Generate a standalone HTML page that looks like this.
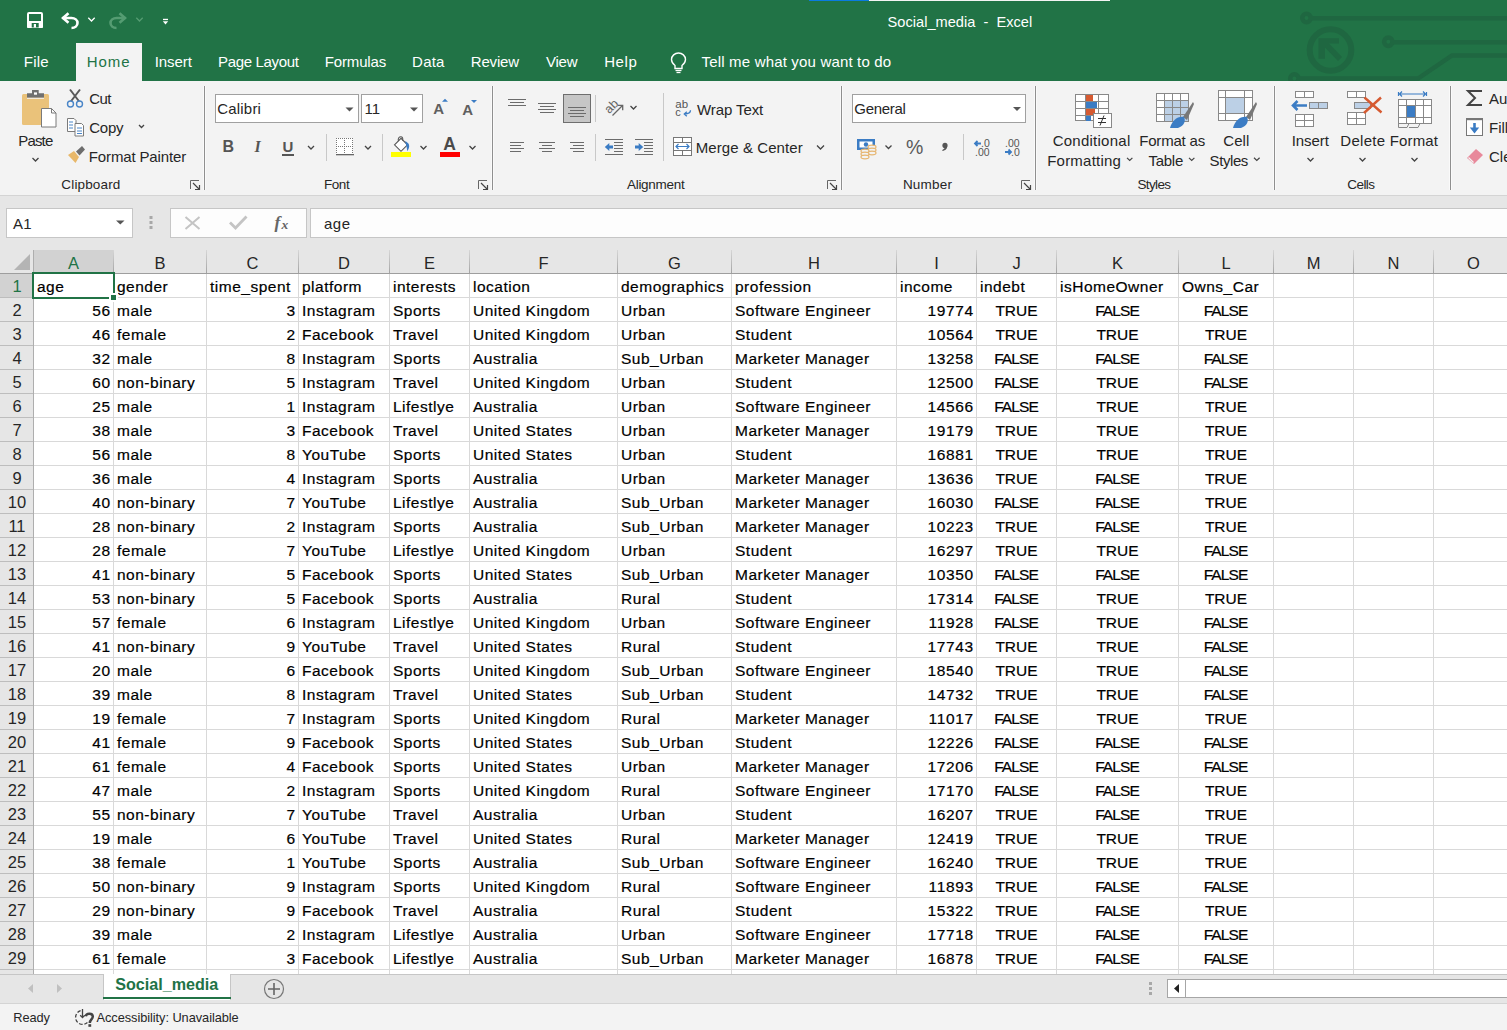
<!DOCTYPE html><html><head><meta charset="utf-8"><style>
*{box-sizing:border-box}
html,body{margin:0;padding:0}
body{width:1507px;height:1030px;overflow:hidden;position:relative;background:#fff;font-family:"Liberation Sans",sans-serif}
.a{position:absolute}
.t{position:absolute;white-space:pre;line-height:1}
svg{position:absolute;overflow:visible}
.c{-webkit-text-stroke:0.2px currentColor}
</style></head><body>
<div class="a" style="left:0;top:0;width:1507px;height:81px;background:#217346"></div>
<div class="a" style="left:809px;top:0;width:60px;height:1px;background:#0a7be0"></div>
<div class="a" style="left:869px;top:0;width:241px;height:1px;background:#f4f4f4"></div>
<svg style="left:0;top:0" width="1507" height="81" viewBox="0 0 1507 81">
<g fill="none" stroke="#1f6741" stroke-width="4.5">
<circle cx="1306.5" cy="18" r="4.2"/><line x1="1311" y1="18.2" x2="1507" y2="18.2"/>
<circle cx="1388.3" cy="41.8" r="4.2"/><line x1="1393" y1="42.2" x2="1507" y2="42.2"/>
<circle cx="1294.4" cy="78.5" r="4.2"/><polyline points="1299,78.5 1418,78.5 1452,55.5 1507,55.5"/>
<circle cx="1330.5" cy="50" r="20.8" stroke-width="6"/>
</g>
<path d="M1318.5 38.3 L1339 38.3 L1339 43.5 L1329 43.5 L1342 57 L1338 61 L1325 47.5 L1325 58.8 L1318.5 58.8 Z" fill="#1f6741"/>
</svg>
<svg style="left:0;top:0" width="200" height="40" viewBox="0 0 200 40">
<rect x="28" y="13" width="14" height="14" rx="1" fill="none" stroke="#fff" stroke-width="2"/>
<rect x="27" y="21" width="16" height="7" rx="1" fill="#fff"/>
<rect x="31.7" y="23" width="7" height="4.5" fill="#217346"/>
<rect x="33.8" y="24" width="2.2" height="3.5" fill="#fff"/>
<path d="M62.5 18 H71.5 C75 18 77.5 20.3 77.5 23 C77.5 25.7 75 28 71.5 28" fill="none" stroke="#fff" stroke-width="2.6"/>
<path d="M68.5 13.2 L63 18 L68.5 22.8" fill="none" stroke="#fff" stroke-width="2.6"/>
<path d="M88.3 17.8 L91.5 21 L94.7 17.8" fill="none" stroke="#fff" stroke-width="1.3"/>
<path d="M125.5 18 H116.5 C113 18 110.5 20.3 110.5 23 C110.5 25.7 113 28 116.5 28" fill="none" stroke="#559c72" stroke-width="2.6"/>
<path d="M119.5 13.2 L125 18 L119.5 22.8" fill="none" stroke="#559c72" stroke-width="2.6"/>
<path d="M136.3 17.8 L139.5 21 L142.7 17.8" fill="none" stroke="#559c72" stroke-width="1.3"/>
<rect x="163" y="18.8" width="5" height="1.3" fill="#fff"/>
<path d="M162.8 21.2 H168.2 L165.5 24.6 Z" fill="#fff"/>
</svg>
<div class="t" style="left:887.62px;top:14.64px;font-size:14.60px;letter-spacing:0.007px;color:#fff;font-weight:normal;font-family:'Liberation Sans';">Social_media  -  Excel</div>
<div class="a" style="left:76px;top:43px;width:66px;height:39px;background:#f3f3f3"></div>
<div class="t" style="left:23.80px;top:54.30px;font-size:15.00px;letter-spacing:0.191px;color:#fff;font-weight:normal;font-family:'Liberation Sans';">File</div>
<div class="t" style="left:86.80px;top:54.30px;font-size:15.00px;letter-spacing:0.910px;color:#217346;font-weight:normal;font-family:'Liberation Sans';">Home</div>
<div class="t" style="left:154.65px;top:54.30px;font-size:15.00px;letter-spacing:-0.039px;color:#fff;font-weight:normal;font-family:'Liberation Sans';">Insert</div>
<div class="t" style="left:218.00px;top:54.30px;font-size:15.00px;letter-spacing:-0.337px;color:#fff;font-weight:normal;font-family:'Liberation Sans';">Page Layout</div>
<div class="t" style="left:324.80px;top:54.30px;font-size:15.00px;letter-spacing:-0.152px;color:#fff;font-weight:normal;font-family:'Liberation Sans';">Formulas</div>
<div class="t" style="left:412.10px;top:54.30px;font-size:15.00px;letter-spacing:0.219px;color:#fff;font-weight:normal;font-family:'Liberation Sans';">Data</div>
<div class="t" style="left:470.80px;top:54.30px;font-size:15.00px;letter-spacing:-0.180px;color:#fff;font-weight:normal;font-family:'Liberation Sans';">Review</div>
<div class="t" style="left:546.00px;top:54.30px;font-size:15.00px;letter-spacing:-0.253px;color:#fff;font-weight:normal;font-family:'Liberation Sans';">View</div>
<div class="t" style="left:604.20px;top:54.30px;font-size:15.00px;letter-spacing:0.598px;color:#fff;font-weight:normal;font-family:'Liberation Sans';">Help</div>
<svg style="left:668px;top:52px" width="22" height="22" viewBox="0 0 22 22">
<path d="M7 13.5 C4.5 11.5 3.5 9.5 3.5 7.5 C3.5 3.8 6.8 1 10.5 1 C14.2 1 17.5 3.8 17.5 7.5 C17.5 9.5 16.5 11.5 14 13.5 V16.5 H7 Z" fill="none" stroke="#fff" stroke-width="1.4"/>
<line x1="7.5" y1="18.5" x2="13.5" y2="18.5" stroke="#fff" stroke-width="1.3"/>
<line x1="8.5" y1="20.5" x2="12.5" y2="20.5" stroke="#fff" stroke-width="1.3"/>
</svg>
<div class="t" style="left:701.60px;top:54.30px;font-size:15.00px;letter-spacing:0.171px;color:#fff;font-weight:normal;font-family:'Liberation Sans';">Tell me what you want to do</div>
<div class="a" style="left:0;top:81px;width:1507px;height:114px;background:#f3f3f3"></div>
<div class="a" style="left:0;top:195px;width:1507px;height:1px;background:#d4d4d4"></div>
<div class="a" style="left:203px;top:86px;width:3px;height:104px;background:#fafafa"></div>
<div class="a" style="left:204px;top:86px;width:1px;height:104px;background:#8f8f8f"></div>
<div class="a" style="left:491px;top:86px;width:3px;height:104px;background:#fafafa"></div>
<div class="a" style="left:492px;top:86px;width:1px;height:104px;background:#8f8f8f"></div>
<div class="a" style="left:840px;top:86px;width:3px;height:104px;background:#fafafa"></div>
<div class="a" style="left:841px;top:86px;width:1px;height:104px;background:#8f8f8f"></div>
<div class="a" style="left:1034px;top:86px;width:3px;height:104px;background:#fafafa"></div>
<div class="a" style="left:1035px;top:86px;width:1px;height:104px;background:#8f8f8f"></div>
<div class="a" style="left:1273px;top:86px;width:3px;height:104px;background:#fafafa"></div>
<div class="a" style="left:1274px;top:86px;width:1px;height:104px;background:#8f8f8f"></div>
<div class="a" style="left:1449px;top:86px;width:3px;height:104px;background:#fafafa"></div>
<div class="a" style="left:1450px;top:86px;width:1px;height:104px;background:#8f8f8f"></div>
<div class="t" style="left:61.33px;top:178.37px;font-size:13.50px;letter-spacing:0.156px;color:#262626;font-weight:normal;font-family:'Liberation Sans';">Clipboard</div>
<div class="t" style="left:323.92px;top:178.37px;font-size:13.50px;letter-spacing:-0.421px;color:#262626;font-weight:normal;font-family:'Liberation Sans';">Font</div>
<div class="t" style="left:627.00px;top:178.37px;font-size:13.50px;letter-spacing:-0.295px;color:#262626;font-weight:normal;font-family:'Liberation Sans';">Alignment</div>
<div class="t" style="left:902.92px;top:178.37px;font-size:13.50px;letter-spacing:0.208px;color:#262626;font-weight:normal;font-family:'Liberation Sans';">Number</div>
<div class="t" style="left:1137.46px;top:178.37px;font-size:13.50px;letter-spacing:-0.623px;color:#262626;font-weight:normal;font-family:'Liberation Sans';">Styles</div>
<div class="t" style="left:1347.33px;top:178.17px;font-size:13.50px;letter-spacing:-0.581px;color:#262626;font-weight:normal;font-family:'Liberation Sans';">Cells</div>
<svg style="left:190px;top:180px" width="11" height="11" viewBox="0 0 11 11">
<path d="M0.5 9 V0.5 H9" fill="none" stroke="#666" stroke-width="1"/>
<path d="M3 3 L9.5 9.5 M5 9.5 H9.5 V5" fill="none" stroke="#444" stroke-width="1.2"/></svg>
<svg style="left:478px;top:180px" width="11" height="11" viewBox="0 0 11 11">
<path d="M0.5 9 V0.5 H9" fill="none" stroke="#666" stroke-width="1"/>
<path d="M3 3 L9.5 9.5 M5 9.5 H9.5 V5" fill="none" stroke="#444" stroke-width="1.2"/></svg>
<svg style="left:827px;top:180px" width="11" height="11" viewBox="0 0 11 11">
<path d="M0.5 9 V0.5 H9" fill="none" stroke="#666" stroke-width="1"/>
<path d="M3 3 L9.5 9.5 M5 9.5 H9.5 V5" fill="none" stroke="#444" stroke-width="1.2"/></svg>
<svg style="left:1021px;top:180px" width="11" height="11" viewBox="0 0 11 11">
<path d="M0.5 9 V0.5 H9" fill="none" stroke="#666" stroke-width="1"/>
<path d="M3 3 L9.5 9.5 M5 9.5 H9.5 V5" fill="none" stroke="#444" stroke-width="1.2"/></svg>
<svg style="left:0;top:81px" width="205" height="114" viewBox="0 81 205 114">
<rect x="22" y="94" width="27" height="31" rx="1.5" fill="#eac27a"/>
<path d="M27 97.8 H44 V93.2 H38.7 V90 H32 V93.2 H27 Z" fill="#707070"/>
<rect x="34" y="92.4" width="3" height="2.3" fill="#fff"/>
<rect x="27" y="97.8" width="17" height="1" fill="#f3f3f3"/>
<path d="M41.5 108.5 H51.5 L56 113 V127 H41.5 Z" fill="#fff" stroke="#7a7a7a" stroke-width="1"/>
<path d="M51.5 108.5 V113 H56" fill="none" stroke="#7a7a7a" stroke-width="1"/>
<path d="M32.5 158 L35.5 161 L38.5 158" fill="none" stroke="#444" stroke-width="1.3"/>
<path d="M70 89.5 L79.2 101.5 M80 89.5 L70.8 101.5" stroke="#5a5a5a" stroke-width="2"/>
<circle cx="70.5" cy="104" r="3" fill="none" stroke="#4a86c8" stroke-width="1.4"/>
<circle cx="79.5" cy="104" r="3" fill="none" stroke="#4a86c8" stroke-width="1.4"/>
<path d="M67.5 118.5 H74 L76 120.5 V131.5 H67.5 Z" fill="#fff" stroke="#7a7a7a" stroke-width="1"/>
<path d="M75 123.5 H81.5 L83.5 125.5 V136 H75 Z" fill="#fff" stroke="#7a7a7a" stroke-width="1"/>
<path d="M69 122 H73 M69 125 H73 M69 128 H73" stroke="#4a86c8" stroke-width="1"/>
<path d="M77 128 H82 M77 131 H82 M77 133.5 H82" stroke="#4a86c8" stroke-width="1"/>
<path d="M139 125 L141.5 127.5 L144 125" fill="none" stroke="#444" stroke-width="1.3"/>
<path d="M68 155 L74 151 L79 157 L75.5 163 Z" fill="#e8b86a"/>
<path d="M76 151.5 L82 146 L85 149.5 L79.5 155.5 Z" fill="#6d6d6d"/>
</svg>
<div class="t" style="left:18.30px;top:132.80px;font-size:15.00px;letter-spacing:-0.854px;color:#262626;font-weight:normal;font-family:'Liberation Sans';">Paste</div>
<div class="t" style="left:89.25px;top:91.30px;font-size:15.00px;letter-spacing:-0.562px;color:#262626;font-weight:normal;font-family:'Liberation Sans';">Cut</div>
<div class="t" style="left:89.25px;top:120.30px;font-size:15.00px;letter-spacing:-0.222px;color:#262626;font-weight:normal;font-family:'Liberation Sans';">Copy</div>
<div class="t" style="left:88.80px;top:148.80px;font-size:15.00px;letter-spacing:-0.139px;color:#262626;font-weight:normal;font-family:'Liberation Sans';">Format Painter</div>
<div class="a" style="left:215px;top:94px;width:144px;height:29px;background:#fff;border:1px solid #a0a0a0"></div>
<div class="a" style="left:361px;top:94px;width:62px;height:29px;background:#fff;border:1px solid #a0a0a0"></div>
<div class="t" style="left:217.25px;top:101.30px;font-size:15.00px;letter-spacing:0.195px;color:#262626;font-weight:normal;font-family:'Liberation Sans';">Calibri</div>
<div class="t" style="left:364.5px;top:101.3px;font-size:15px;color:#262626;">11</div>
<svg style="left:200px;top:81px" width="300" height="114" viewBox="200 81 300 114">
<path d="M345.5 107.5 H353.5 L349.5 111.5 Z" fill="#555"/>
<path d="M410 107.5 H418 L414 111.5 Z" fill="#555"/>

<path d="M442 101.8 L445 98.8 L448 101.8 Z" fill="#3b7cc4"/>

<path d="M471 99.9 H477 L474 102.9 Z" fill="#3b7cc4"/>
<path d="M308 146 L311 149 L314 146" fill="none" stroke="#444" stroke-width="1.3"/>
<line x1="326.5" y1="134" x2="326.5" y2="161" stroke="#c8c8c8"/>
<rect x="336" y="138" width="17" height="16" fill="#fff"/><rect x="336" y="138" width="1" height="1" fill="#777"/><rect x="336" y="140" width="1" height="1" fill="#777"/><rect x="336" y="142" width="1" height="1" fill="#777"/><rect x="336" y="144" width="1" height="1" fill="#777"/><rect x="336" y="146" width="1" height="1" fill="#777"/><rect x="336" y="148" width="1" height="1" fill="#777"/><rect x="336" y="150" width="1" height="1" fill="#777"/><rect x="336" y="152" width="1" height="1" fill="#777"/><rect x="338" y="138" width="1" height="1" fill="#777"/><rect x="338" y="146" width="1" height="1" fill="#777"/><rect x="340" y="138" width="1" height="1" fill="#777"/><rect x="340" y="146" width="1" height="1" fill="#777"/><rect x="342" y="138" width="1" height="1" fill="#777"/><rect x="342" y="146" width="1" height="1" fill="#777"/><rect x="344" y="138" width="1" height="1" fill="#777"/><rect x="344" y="140" width="1" height="1" fill="#777"/><rect x="344" y="142" width="1" height="1" fill="#777"/><rect x="344" y="144" width="1" height="1" fill="#777"/><rect x="344" y="146" width="1" height="1" fill="#777"/><rect x="344" y="148" width="1" height="1" fill="#777"/><rect x="344" y="150" width="1" height="1" fill="#777"/><rect x="344" y="152" width="1" height="1" fill="#777"/><rect x="346" y="138" width="1" height="1" fill="#777"/><rect x="346" y="146" width="1" height="1" fill="#777"/><rect x="348" y="138" width="1" height="1" fill="#777"/><rect x="348" y="146" width="1" height="1" fill="#777"/><rect x="350" y="138" width="1" height="1" fill="#777"/><rect x="350" y="146" width="1" height="1" fill="#777"/><rect x="352" y="138" width="1" height="1" fill="#777"/><rect x="352" y="140" width="1" height="1" fill="#777"/><rect x="352" y="142" width="1" height="1" fill="#777"/><rect x="352" y="144" width="1" height="1" fill="#777"/><rect x="352" y="146" width="1" height="1" fill="#777"/><rect x="352" y="148" width="1" height="1" fill="#777"/><rect x="352" y="150" width="1" height="1" fill="#777"/><rect x="352" y="152" width="1" height="1" fill="#777"/><rect x="336" y="154" width="18" height="1.3" fill="#666"/>
<path d="M365 146 L368 149 L371 146" fill="none" stroke="#444" stroke-width="1.3"/>
<line x1="382.5" y1="134" x2="382.5" y2="161" stroke="#c8c8c8"/>
<path d="M394.5 144.8 L401 138.3 L407.5 144.8 L401 151.3 Z" fill="#fff" stroke="#555" stroke-width="1.1"/>
<path d="M398.5 141 C397.5 138 399.5 136.8 400.8 136.8 C402.3 136.8 403.3 138.3 402.5 140.5" fill="none" stroke="#555" stroke-width="1.1"/>
<path d="M405 141.2 C409 142.5 411 146 407.2 151.3 C407 148 406.5 145 405 141.2 Z" fill="#3b7cc4"/>
<rect x="391" y="152" width="20" height="5" fill="#ffff00"/>
<path d="M420.5 146 L423.5 149 L426.5 146" fill="none" stroke="#444" stroke-width="1.3"/>

<rect x="440" y="152" width="20" height="5" fill="#ff0000"/>
<path d="M469.5 146 L472.5 149 L475.5 146" fill="none" stroke="#444" stroke-width="1.3"/>
</svg>
<div class="t" style="left:433.3px;top:101.1px;font-size:15px;color:#5f5f5f;font-weight:bold">A</div>
<div class="t" style="left:462.3px;top:102.2px;font-size:15px;color:#5f5f5f;font-weight:bold">A</div>
<div class="t" style="left:443.2px;top:135.99px;font-size:17.5px;color:#4a4a4a;font-weight:bold">A</div>
<div class="t" style="left:222.5px;top:139.46px;font-size:16px;color:#555;font-weight:bold">B</div>
<div class="t" style="left:254.5px;top:139.46px;font-size:16px;color:#555;font-style:italic;font-family:'Liberation Serif';font-weight:bold">I</div>
<div class="t" style="left:282.5px;top:139.3px;font-size:15px;color:#555;font-weight:bold">U</div>
<div class="a" style="left:282px;top:154px;width:12px;height:1.5px;background:#555"></div>
<div class="a" style="left:563px;top:94px;width:28px;height:29px;background:#c6c6c6;border:1px solid #6e6e6e"></div>
<svg style="left:490px;top:81px" width="360" height="114" viewBox="490 81 360 114"><rect x="508" y="99" width="18" height="1" fill="#6b6b6b"/><rect x="508" y="105" width="18" height="1" fill="#6b6b6b"/><rect x="510" y="102" width="14" height="1" fill="#6b6b6b"/><rect x="538" y="103" width="18" height="1" fill="#6b6b6b"/><rect x="538" y="109" width="18" height="1" fill="#6b6b6b"/><rect x="540" y="106" width="14" height="1" fill="#6b6b6b"/><rect x="540" y="112" width="14" height="1" fill="#6b6b6b"/><rect x="568" y="107" width="18" height="1" fill="#6b6b6b"/><rect x="568" y="113" width="18" height="1" fill="#6b6b6b"/><rect x="570" y="110" width="14" height="1" fill="#6b6b6b"/><rect x="570" y="116" width="14" height="1" fill="#6b6b6b"/><line x1="595.5" y1="95" x2="595.5" y2="122" stroke="#c8c8c8"/><text x="604" y="110.5" font-family="Liberation Sans" font-size="12.5" fill="#666" transform="rotate(-45 611 106)">ab</text><path d="M612.5 115.5 L622.5 105.5 M617.8 105.3 H622.7 V110.2" fill="none" stroke="#666" stroke-width="1.3"/><path d="M630.5 106 L633.5 109 L636.5 106" fill="none" stroke="#444" stroke-width="1.3"/><rect x="510" y="142" width="14" height="1" fill="#6b6b6b"/><rect x="510" y="148" width="14" height="1" fill="#6b6b6b"/><rect x="510" y="145" width="11" height="1" fill="#6b6b6b"/><rect x="510" y="151" width="11" height="1" fill="#6b6b6b"/><rect x="539" y="142" width="16" height="1" fill="#6b6b6b"/><rect x="539" y="148" width="16" height="1" fill="#6b6b6b"/><rect x="542" y="145" width="10" height="1" fill="#6b6b6b"/><rect x="542" y="151" width="10" height="1" fill="#6b6b6b"/><rect x="570" y="142" width="14" height="1" fill="#6b6b6b"/><rect x="570" y="148" width="14" height="1" fill="#6b6b6b"/><rect x="573" y="145" width="11" height="1" fill="#6b6b6b"/><rect x="573" y="151" width="11" height="1" fill="#6b6b6b"/><line x1="595.5" y1="134" x2="595.5" y2="161" stroke="#c8c8c8"/><rect x="605" y="139" width="18" height="1" fill="#6b6b6b"/><rect x="605" y="154" width="18" height="1" fill="#6b6b6b"/><rect x="614" y="142" width="9" height="1" fill="#6b6b6b"/><rect x="614" y="145" width="9" height="1" fill="#6b6b6b"/><rect x="614" y="148" width="9" height="1" fill="#6b6b6b"/><rect x="614" y="151" width="9" height="1" fill="#6b6b6b"/><path d="M604.8 147 L609.3 143 V145.6 H613 V148.4 H609.3 V151 Z" fill="#3b7cc4"/><rect x="635" y="139" width="18" height="1" fill="#6b6b6b"/><rect x="635" y="154" width="18" height="1" fill="#6b6b6b"/><rect x="644" y="142" width="9" height="1" fill="#6b6b6b"/><rect x="644" y="145" width="9" height="1" fill="#6b6b6b"/><rect x="644" y="148" width="9" height="1" fill="#6b6b6b"/><rect x="644" y="151" width="9" height="1" fill="#6b6b6b"/><path d="M643.2 147 L638.7 143 V145.6 H635 V148.4 H638.7 V151 Z" fill="#3b7cc4"/><line x1="663.5" y1="93" x2="663.5" y2="161" stroke="#c8c8c8"/><text x="675.3" y="107.8" font-family="Liberation Sans" font-size="11.5" fill="#555">ab</text><text x="675.3" y="115.8" font-family="Liberation Sans" font-size="11" fill="#555">c</text><path d="M690.5 110.3 C690.5 113 688.5 114 684.5 114 M686.8 111.8 L684.3 114 L686.8 116.2" fill="none" stroke="#3b7cc4" stroke-width="1.3"/><rect x="673.5" y="137.5" width="18" height="18" fill="#fff" stroke="#777"/><path d="M673.5 142.5 H691.5 M673.5 150.5 H691.5 M682.5 137.5 V142.5 M682.5 150.5 V155.5" stroke="#777" fill="none"/><path d="M676 146.5 H689 M678.5 144 L676 146.5 L678.5 149 M686.5 144 L689 146.5 L686.5 149" fill="none" stroke="#3b7cc4" stroke-width="1.2"/><path d="M817 145.5 L820.5 149 L824 145.5" fill="none" stroke="#444" stroke-width="1.3"/></svg>
<div class="t" style="left:697.00px;top:101.90px;font-size:15.00px;letter-spacing:-0.097px;color:#262626;font-weight:normal;font-family:'Liberation Sans';">Wrap Text</div>
<div class="t" style="left:695.80px;top:140.30px;font-size:15.00px;letter-spacing:0.078px;color:#262626;font-weight:normal;font-family:'Liberation Sans';">Merge &amp; Center</div>
<div class="a" style="left:852px;top:94px;width:174px;height:29px;background:#fff;border:1px solid #a0a0a0"></div>
<div class="t" style="left:854.25px;top:100.70px;font-size:15.00px;letter-spacing:-0.280px;color:#262626;font-weight:normal;font-family:'Liberation Sans';">General</div>
<svg style="left:840px;top:81px" width="200" height="114" viewBox="840 81 200 114">
<path d="M1013 107 H1021 L1017 111 Z" fill="#555"/>
<rect x="857" y="139" width="18" height="11" fill="#3b7cc4"/>
<rect x="859.5" y="141.5" width="13" height="6" fill="#fff"/>
<circle cx="866" cy="144.5" r="2.2" fill="#3b7cc4"/>
<g fill="#f3f3f3" stroke="#e6b672" stroke-width="1.2">
<ellipse cx="872" cy="147" rx="4" ry="1.8"/><ellipse cx="872" cy="150" rx="4" ry="1.8"/><ellipse cx="872" cy="153" rx="4" ry="1.8"/>
<ellipse cx="865" cy="151" rx="4" ry="1.8"/><ellipse cx="865" cy="154" rx="4" ry="1.8"/><ellipse cx="865" cy="157" rx="4" ry="1.8"/>
</g>
<path d="M885.5 145.5 L888.5 148.5 L891.5 145.5" fill="none" stroke="#444" stroke-width="1.3"/>
<line x1="963.5" y1="134" x2="963.5" y2="160" stroke="#c8c8c8"/>
<circle cx="945" cy="145.4" r="2.6" fill="#555"/><path d="M946.8 146.5 C947.5 148.5 945.5 150.5 942.5 151 L942.3 150 C944 149.3 945 148 944.8 146.8 Z" fill="#555"/>
<path d="M981 143.5 H975 M977.5 141 L975 143.5 L977.5 146" fill="none" stroke="#3b7cc4" stroke-width="1.8"/>
<path d="M1005 152 H1011 M1008.5 149.5 L1011 152 L1008.5 154.5" fill="none" stroke="#3b7cc4" stroke-width="1.8"/>
</svg>
<div class="t" style="left:906px;top:137.69px;font-size:19.5px;color:#5a5a5a;">%</div>
<div class="t" style="left:981px;top:138.11px;font-size:10.5px;color:#555;">.0</div>
<div class="t" style="left:975px;top:147.11px;font-size:10.5px;color:#555;">.00</div>
<div class="t" style="left:1005px;top:138.11px;font-size:10.5px;color:#555;">.00</div>
<div class="t" style="left:1011px;top:147.11px;font-size:10.5px;color:#555;">.0</div>
<svg style="left:1035px;top:81px" width="240" height="114" viewBox="1035 81 240 114">
<g fill="#fff" stroke="#888" stroke-width="1">
<rect x="1075.5" y="94.5" width="33" height="26"/>
</g>
<rect x="1086" y="95" width="7" height="6.5" fill="#d65a31"/>
<rect x="1086" y="102" width="11" height="6.5" fill="#3b7cc4"/>
<rect x="1086" y="109" width="9" height="6.5" fill="#d65a31"/>
<rect x="1086" y="116" width="5" height="5" fill="#3b7cc4"/>
<path d="M1075.5 101.5 H1108.5 M1075.5 108.5 H1108.5 M1075.5 115.5 H1108.5 M1085.5 94.5 V120.5 M1098.5 94.5 V120.5" stroke="#888" fill="none"/>
<rect x="1093.5" y="113.5" width="18" height="14" fill="#fff" stroke="#888"/>
<path d="M1098 118.5 H1106 M1098 122.5 H1106 M1104 115.5 L1100 125.5" stroke="#333" stroke-width="1"/>
<rect x="1156.5" y="93.5" width="32" height="28" fill="#fff" stroke="#888"/>
<rect x="1164" y="101" width="24" height="20" fill="#bcd0e6"/>
<path d="M1156.5 100.5 H1188.5 M1156.5 107.5 H1188.5 M1156.5 114.5 H1188.5 M1164.5 93.5 V121.5 M1172.5 93.5 V121.5 M1180.5 93.5 V121.5" stroke="#888" fill="none"/>
<path d="M1183 117 L1193 102 L1194 104 L1187 120 Z" fill="#777"/>
<path d="M1170 128 C1172 121 1177 116 1184 117 C1186 121 1184 126 1178 128 Z" fill="#3b7cc4"/>
<rect x="1218.5" y="90.5" width="34" height="30" fill="#fff" stroke="#888"/>
<rect x="1226" y="98" width="18" height="15" fill="#bcd0e6"/>
<path d="M1218.5 97.5 H1252.5 M1218.5 113.5 H1252.5 M1225.5 90.5 V120.5 M1244.5 90.5 V120.5" stroke="#888" fill="none"/>
<path d="M1246 117 L1256 102 L1257 104 L1250 120 Z" fill="#777"/>
<path d="M1233 128 C1235 121 1240 116 1247 117 C1249 121 1247 126 1241 128 Z" fill="#3b7cc4"/>
<path d="M1127 157.8 L1129.7 160.5 L1132.4 157.8" fill="none" stroke="#444" stroke-width="1.2"/>
<path d="M1189 157.8 L1191.7 160.5 L1194.4 157.8" fill="none" stroke="#444" stroke-width="1.2"/>
<path d="M1254 157.8 L1256.8 160.5 L1259.6 157.8" fill="none" stroke="#444" stroke-width="1.2"/>
</svg>
<div class="t" style="left:1052.65px;top:133.30px;font-size:15.00px;letter-spacing:0.253px;color:#262626;font-weight:normal;font-family:'Liberation Sans';">Conditional</div>
<div class="t" style="left:1047.20px;top:152.70px;font-size:15.00px;letter-spacing:0.228px;color:#262626;font-weight:normal;font-family:'Liberation Sans';">Formatting</div>
<div class="t" style="left:1139.20px;top:133.30px;font-size:15.00px;letter-spacing:-0.183px;color:#262626;font-weight:normal;font-family:'Liberation Sans';">Format as</div>
<div class="t" style="left:1148.40px;top:152.70px;font-size:15.00px;letter-spacing:-0.254px;color:#262626;font-weight:normal;font-family:'Liberation Sans';">Table</div>
<div class="t" style="left:1223.25px;top:133.30px;font-size:15.00px;letter-spacing:0.048px;color:#262626;font-weight:normal;font-family:'Liberation Sans';">Cell</div>
<div class="t" style="left:1209.60px;top:152.70px;font-size:15.00px;letter-spacing:-0.419px;color:#262626;font-weight:normal;font-family:'Liberation Sans';">Styles</div>
<svg style="left:1274px;top:81px" width="233" height="114" viewBox="1274 81 233 114">
<g transform="translate(-4,0)"><g fill="#fff" stroke="#888" stroke-width="1">
<rect x="1299.5" y="91.5" width="18" height="6"/><path d="M1308.5 91.5 V97.5"/>
<rect x="1299.5" y="114.5" width="18" height="12"/><path d="M1308.5 114.5 V126.5 M1299.5 120.5 H1317.5"/>
<rect x="1313.5" y="102.5" width="18" height="6" fill="#bcd0e6"/><path d="M1322.5 102.5 V108.5"/>
</g>
<path d="M1311 105.5 H1297 M1301.5 101 L1297 105.5 L1301.5 110" fill="none" stroke="#3b7cc4" stroke-width="2.6"/>
<g fill="#fff" stroke="#888" stroke-width="1">
<rect x="1351.5" y="91.5" width="18" height="6"/><path d="M1360.5 91.5 V97.5"/>
<rect x="1351.5" y="112.5" width="18" height="12"/><path d="M1360.5 112.5 V124.5 M1351.5 118.5 H1369.5"/>
<rect x="1358.5" y="102.5" width="16" height="6" fill="#bcd0e6"/>
</g>
<path d="M1368.5 97.5 L1385.5 112.5 M1385 97.5 L1368 113" stroke="#d65a31" stroke-width="2.4"/>
<path d="M1402.5 92 V96 M1430.5 92 V96 M1403 94 H1430 M1406 91.5 L1403.5 94 L1406 96.5 M1427 91.5 L1429.5 94 L1427 96.5" fill="none" stroke="#3b7cc4" stroke-width="1.2"/>
<rect x="1402.5" y="99.5" width="33" height="24" fill="#fff" stroke="#888"/>
<path d="M1402.5 105.5 H1435.5 M1402.5 117.5 H1435.5 M1410.5 99.5 V123.5 M1419.5 99.5 V123.5 M1427.5 99.5 V123.5" stroke="#888" fill="none"/>
<rect x="1411" y="106" width="8" height="11" fill="#3b7cc4"/>
<path d="M1402.5 123.5 V127.5 H1411 L1413 123.5 M1413 127.5 H1422 L1424 123.5" fill="none" stroke="#888"/></g>
<path d="M1307.5 158 L1310.5 161 L1313.5 158" fill="none" stroke="#444" stroke-width="1.3"/>
<path d="M1359.5 158 L1362.5 161 L1365.5 158" fill="none" stroke="#444" stroke-width="1.3"/>
<path d="M1411.5 158 L1414.5 161 L1417.5 158" fill="none" stroke="#444" stroke-width="1.3"/>
<path d="M1482 91 H1468 L1475 98 L1468 105 H1482" fill="none" stroke="#444" stroke-width="2"/>
<rect x="1466.5" y="118.5" width="16" height="17" fill="#fff" stroke="#777"/>
<rect x="1466" y="118" width="17" height="2.2" fill="#777"/>
<path d="M1474.5 123 V129" stroke="#3b7cc4" stroke-width="2.6"/><path d="M1469.8 127.5 H1479.2 L1474.5 133.5 Z" fill="#3b7cc4"/>
<path d="M1467 158 L1476 149 L1483 155 L1474 164 Z" fill="#e8899b"/>
<path d="M1468.5 157.5 L1473.5 162.5" stroke="#f3f3f3" stroke-width="1.2"/>
</svg>
<div class="t" style="left:1291.65px;top:132.60px;font-size:15.00px;letter-spacing:-0.039px;color:#262626;font-weight:normal;font-family:'Liberation Sans';">Insert</div>
<div class="t" style="left:1340.30px;top:132.60px;font-size:15.00px;letter-spacing:0.277px;color:#262626;font-weight:normal;font-family:'Liberation Sans';">Delete</div>
<div class="t" style="left:1389.80px;top:132.60px;font-size:15.00px;letter-spacing:0.133px;color:#262626;font-weight:normal;font-family:'Liberation Sans';">Format</div>
<div class="t" style="left:1489px;top:90.9px;font-size:15px;color:#262626;">Au</div>
<div class="t" style="left:1489px;top:120.0px;font-size:15px;color:#262626;">Fill</div>
<div class="t" style="left:1489px;top:149.1px;font-size:15px;color:#262626;">Cle</div>
<div class="a" style="left:0;top:196px;width:1507px;height:54px;background:#e6e6e6"></div>
<div class="a" style="left:6px;top:208px;width:127px;height:30px;background:#fff;border:1px solid #c6c6c6"></div>
<div class="t" style="left:13.00px;top:216.00px;font-size:15.00px;letter-spacing:0.345px;color:#262626;font-weight:normal;font-family:'Liberation Sans';">A1</div>
<div class="a" style="left:170px;top:208px;width:137px;height:30px;background:#fdfdfd;border:1px solid #c6c6c6"></div>
<svg style="left:0;top:196px" width="360" height="54" viewBox="0 196 360 54">
<path d="M116 220.5 H124.5 L120.25 224.5 Z" fill="#555"/>
<rect x="149.5" y="216" width="3" height="3" fill="#a8a8a8"/><rect x="149.5" y="221" width="3" height="3" fill="#a8a8a8"/><rect x="149.5" y="226" width="3" height="3" fill="#a8a8a8"/>
<path d="M185.5 217 L199.5 229 M199.5 217 L185.5 229" stroke="#c4c4c4" stroke-width="2"/>
<path d="M230 222.5 L235.5 228 L246.5 216.5" fill="none" stroke="#c4c4c4" stroke-width="2.8"/>
</svg>
<div class="t" style="left:274.5px;top:214.19px;font-size:17.5px;color:#666;font-family:'Liberation Serif';font-style:italic;font-weight:bold">f</div>
<div class="t" style="left:281.5px;top:217.57px;font-size:13.5px;color:#666;font-family:'Liberation Serif';font-style:italic;font-weight:bold">x</div>
<div class="a" style="left:310px;top:208px;width:1200px;height:30px;background:#fdfdfd;border:1px solid #c6c6c6"></div>
<div class="t" style="left:324px;top:216.0px;font-size:15px;color:#262626;letter-spacing:0.5px;">age</div>
<div class="a" style="left:0;top:250px;width:1507px;height:724px;background:#fff"></div>
<div class="a" style="left:0;top:250px;width:1507px;height:23px;background:#e6e6e6"></div>
<div class="a" style="left:0;top:273px;width:33px;height:701px;background:#e6e6e6"></div>
<div class="a" style="left:33px;top:250px;width:80px;height:23px;background:#d2d2d2"></div>
<div class="a" style="left:0;top:274px;width:33px;height:23px;background:#d2d2d2"></div>
<svg style="left:0;top:250px" width="33" height="23" viewBox="0 250 33 23"><path d="M30 254 V270 H14 Z" fill="#b4b4b4"/></svg>
<div class="a" style="left:33px;top:250px;width:1px;height:724px;background:#aeaeae"></div>
<div class="a" style="left:113px;top:250px;width:1px;height:23px;background:linear-gradient(#d6d6d6,#a4a4a4)"></div>
<div class="a" style="left:113px;top:274px;width:1px;height:700px;background:#d9d9d9"></div>
<div class="a" style="left:206px;top:250px;width:1px;height:23px;background:linear-gradient(#d6d6d6,#a4a4a4)"></div>
<div class="a" style="left:206px;top:274px;width:1px;height:700px;background:#d9d9d9"></div>
<div class="a" style="left:298px;top:250px;width:1px;height:23px;background:linear-gradient(#d6d6d6,#a4a4a4)"></div>
<div class="a" style="left:298px;top:274px;width:1px;height:700px;background:#d9d9d9"></div>
<div class="a" style="left:389px;top:250px;width:1px;height:23px;background:linear-gradient(#d6d6d6,#a4a4a4)"></div>
<div class="a" style="left:389px;top:274px;width:1px;height:700px;background:#d9d9d9"></div>
<div class="a" style="left:469px;top:250px;width:1px;height:23px;background:linear-gradient(#d6d6d6,#a4a4a4)"></div>
<div class="a" style="left:469px;top:274px;width:1px;height:700px;background:#d9d9d9"></div>
<div class="a" style="left:617px;top:250px;width:1px;height:23px;background:linear-gradient(#d6d6d6,#a4a4a4)"></div>
<div class="a" style="left:617px;top:274px;width:1px;height:700px;background:#d9d9d9"></div>
<div class="a" style="left:731px;top:250px;width:1px;height:23px;background:linear-gradient(#d6d6d6,#a4a4a4)"></div>
<div class="a" style="left:731px;top:274px;width:1px;height:700px;background:#d9d9d9"></div>
<div class="a" style="left:896px;top:250px;width:1px;height:23px;background:linear-gradient(#d6d6d6,#a4a4a4)"></div>
<div class="a" style="left:896px;top:274px;width:1px;height:700px;background:#d9d9d9"></div>
<div class="a" style="left:976px;top:250px;width:1px;height:23px;background:linear-gradient(#d6d6d6,#a4a4a4)"></div>
<div class="a" style="left:976px;top:274px;width:1px;height:700px;background:#d9d9d9"></div>
<div class="a" style="left:1056px;top:250px;width:1px;height:23px;background:linear-gradient(#d6d6d6,#a4a4a4)"></div>
<div class="a" style="left:1056px;top:274px;width:1px;height:700px;background:#d9d9d9"></div>
<div class="a" style="left:1178px;top:250px;width:1px;height:23px;background:linear-gradient(#d6d6d6,#a4a4a4)"></div>
<div class="a" style="left:1178px;top:274px;width:1px;height:700px;background:#d9d9d9"></div>
<div class="a" style="left:1273px;top:250px;width:1px;height:23px;background:linear-gradient(#d6d6d6,#a4a4a4)"></div>
<div class="a" style="left:1273px;top:274px;width:1px;height:700px;background:#d9d9d9"></div>
<div class="a" style="left:1353px;top:250px;width:1px;height:23px;background:linear-gradient(#d6d6d6,#a4a4a4)"></div>
<div class="a" style="left:1353px;top:274px;width:1px;height:700px;background:#d9d9d9"></div>
<div class="a" style="left:1433px;top:250px;width:1px;height:23px;background:linear-gradient(#d6d6d6,#a4a4a4)"></div>
<div class="a" style="left:1433px;top:274px;width:1px;height:700px;background:#d9d9d9"></div>
<div class="a" style="left:1513px;top:250px;width:1px;height:23px;background:linear-gradient(#d6d6d6,#a4a4a4)"></div>
<div class="a" style="left:1513px;top:274px;width:1px;height:700px;background:#d9d9d9"></div>
<div class="a" style="left:0;top:273px;width:1507px;height:1px;background:#9e9e9e"></div>
<div class="a" style="left:0;top:297px;width:33px;height:1px;background:#bdbdbd"></div>
<div class="a" style="left:34px;top:297px;width:1473px;height:1px;background:#d9d9d9"></div>
<div class="a" style="left:0;top:321px;width:33px;height:1px;background:#bdbdbd"></div>
<div class="a" style="left:34px;top:321px;width:1473px;height:1px;background:#d9d9d9"></div>
<div class="a" style="left:0;top:345px;width:33px;height:1px;background:#bdbdbd"></div>
<div class="a" style="left:34px;top:345px;width:1473px;height:1px;background:#d9d9d9"></div>
<div class="a" style="left:0;top:369px;width:33px;height:1px;background:#bdbdbd"></div>
<div class="a" style="left:34px;top:369px;width:1473px;height:1px;background:#d9d9d9"></div>
<div class="a" style="left:0;top:393px;width:33px;height:1px;background:#bdbdbd"></div>
<div class="a" style="left:34px;top:393px;width:1473px;height:1px;background:#d9d9d9"></div>
<div class="a" style="left:0;top:417px;width:33px;height:1px;background:#bdbdbd"></div>
<div class="a" style="left:34px;top:417px;width:1473px;height:1px;background:#d9d9d9"></div>
<div class="a" style="left:0;top:441px;width:33px;height:1px;background:#bdbdbd"></div>
<div class="a" style="left:34px;top:441px;width:1473px;height:1px;background:#d9d9d9"></div>
<div class="a" style="left:0;top:465px;width:33px;height:1px;background:#bdbdbd"></div>
<div class="a" style="left:34px;top:465px;width:1473px;height:1px;background:#d9d9d9"></div>
<div class="a" style="left:0;top:489px;width:33px;height:1px;background:#bdbdbd"></div>
<div class="a" style="left:34px;top:489px;width:1473px;height:1px;background:#d9d9d9"></div>
<div class="a" style="left:0;top:513px;width:33px;height:1px;background:#bdbdbd"></div>
<div class="a" style="left:34px;top:513px;width:1473px;height:1px;background:#d9d9d9"></div>
<div class="a" style="left:0;top:537px;width:33px;height:1px;background:#bdbdbd"></div>
<div class="a" style="left:34px;top:537px;width:1473px;height:1px;background:#d9d9d9"></div>
<div class="a" style="left:0;top:561px;width:33px;height:1px;background:#bdbdbd"></div>
<div class="a" style="left:34px;top:561px;width:1473px;height:1px;background:#d9d9d9"></div>
<div class="a" style="left:0;top:585px;width:33px;height:1px;background:#bdbdbd"></div>
<div class="a" style="left:34px;top:585px;width:1473px;height:1px;background:#d9d9d9"></div>
<div class="a" style="left:0;top:609px;width:33px;height:1px;background:#bdbdbd"></div>
<div class="a" style="left:34px;top:609px;width:1473px;height:1px;background:#d9d9d9"></div>
<div class="a" style="left:0;top:633px;width:33px;height:1px;background:#bdbdbd"></div>
<div class="a" style="left:34px;top:633px;width:1473px;height:1px;background:#d9d9d9"></div>
<div class="a" style="left:0;top:657px;width:33px;height:1px;background:#bdbdbd"></div>
<div class="a" style="left:34px;top:657px;width:1473px;height:1px;background:#d9d9d9"></div>
<div class="a" style="left:0;top:681px;width:33px;height:1px;background:#bdbdbd"></div>
<div class="a" style="left:34px;top:681px;width:1473px;height:1px;background:#d9d9d9"></div>
<div class="a" style="left:0;top:705px;width:33px;height:1px;background:#bdbdbd"></div>
<div class="a" style="left:34px;top:705px;width:1473px;height:1px;background:#d9d9d9"></div>
<div class="a" style="left:0;top:729px;width:33px;height:1px;background:#bdbdbd"></div>
<div class="a" style="left:34px;top:729px;width:1473px;height:1px;background:#d9d9d9"></div>
<div class="a" style="left:0;top:753px;width:33px;height:1px;background:#bdbdbd"></div>
<div class="a" style="left:34px;top:753px;width:1473px;height:1px;background:#d9d9d9"></div>
<div class="a" style="left:0;top:777px;width:33px;height:1px;background:#bdbdbd"></div>
<div class="a" style="left:34px;top:777px;width:1473px;height:1px;background:#d9d9d9"></div>
<div class="a" style="left:0;top:801px;width:33px;height:1px;background:#bdbdbd"></div>
<div class="a" style="left:34px;top:801px;width:1473px;height:1px;background:#d9d9d9"></div>
<div class="a" style="left:0;top:825px;width:33px;height:1px;background:#bdbdbd"></div>
<div class="a" style="left:34px;top:825px;width:1473px;height:1px;background:#d9d9d9"></div>
<div class="a" style="left:0;top:849px;width:33px;height:1px;background:#bdbdbd"></div>
<div class="a" style="left:34px;top:849px;width:1473px;height:1px;background:#d9d9d9"></div>
<div class="a" style="left:0;top:873px;width:33px;height:1px;background:#bdbdbd"></div>
<div class="a" style="left:34px;top:873px;width:1473px;height:1px;background:#d9d9d9"></div>
<div class="a" style="left:0;top:897px;width:33px;height:1px;background:#bdbdbd"></div>
<div class="a" style="left:34px;top:897px;width:1473px;height:1px;background:#d9d9d9"></div>
<div class="a" style="left:0;top:921px;width:33px;height:1px;background:#bdbdbd"></div>
<div class="a" style="left:34px;top:921px;width:1473px;height:1px;background:#d9d9d9"></div>
<div class="a" style="left:0;top:945px;width:33px;height:1px;background:#bdbdbd"></div>
<div class="a" style="left:34px;top:945px;width:1473px;height:1px;background:#d9d9d9"></div>
<div class="a" style="left:0;top:969px;width:33px;height:1px;background:#bdbdbd"></div>
<div class="a" style="left:34px;top:969px;width:1473px;height:1px;background:#d9d9d9"></div>
<div class="t" style="left:33px;top:254.63px;width:81px;text-align:center;font-size:16.5px;color:#217346">A</div>
<div class="t" style="left:113px;top:254.63px;width:94px;text-align:center;font-size:16.5px;color:#262626">B</div>
<div class="t" style="left:206px;top:254.63px;width:93px;text-align:center;font-size:16.5px;color:#262626">C</div>
<div class="t" style="left:298px;top:254.63px;width:92px;text-align:center;font-size:16.5px;color:#262626">D</div>
<div class="t" style="left:389px;top:254.63px;width:81px;text-align:center;font-size:16.5px;color:#262626">E</div>
<div class="t" style="left:469px;top:254.63px;width:149px;text-align:center;font-size:16.5px;color:#262626">F</div>
<div class="t" style="left:617px;top:254.63px;width:115px;text-align:center;font-size:16.5px;color:#262626">G</div>
<div class="t" style="left:731px;top:254.63px;width:166px;text-align:center;font-size:16.5px;color:#262626">H</div>
<div class="t" style="left:896px;top:254.63px;width:81px;text-align:center;font-size:16.5px;color:#262626">I</div>
<div class="t" style="left:976px;top:254.63px;width:81px;text-align:center;font-size:16.5px;color:#262626">J</div>
<div class="t" style="left:1056px;top:254.63px;width:123px;text-align:center;font-size:16.5px;color:#262626">K</div>
<div class="t" style="left:1178px;top:254.63px;width:96px;text-align:center;font-size:16.5px;color:#262626">L</div>
<div class="t" style="left:1273px;top:254.63px;width:81px;text-align:center;font-size:16.5px;color:#262626">M</div>
<div class="t" style="left:1353px;top:254.63px;width:81px;text-align:center;font-size:16.5px;color:#262626">N</div>
<div class="t" style="left:1433px;top:254.63px;width:81px;text-align:center;font-size:16.5px;color:#262626">O</div>
<div class="t" style="left:0;top:278.33px;width:34px;text-align:center;font-size:16.5px;color:#217346">1</div>
<div class="t" style="left:0;top:302.33px;width:34px;text-align:center;font-size:16.5px;color:#262626">2</div>
<div class="t" style="left:0;top:326.33px;width:34px;text-align:center;font-size:16.5px;color:#262626">3</div>
<div class="t" style="left:0;top:350.33px;width:34px;text-align:center;font-size:16.5px;color:#262626">4</div>
<div class="t" style="left:0;top:374.33px;width:34px;text-align:center;font-size:16.5px;color:#262626">5</div>
<div class="t" style="left:0;top:398.33px;width:34px;text-align:center;font-size:16.5px;color:#262626">6</div>
<div class="t" style="left:0;top:422.33px;width:34px;text-align:center;font-size:16.5px;color:#262626">7</div>
<div class="t" style="left:0;top:446.33px;width:34px;text-align:center;font-size:16.5px;color:#262626">8</div>
<div class="t" style="left:0;top:470.33px;width:34px;text-align:center;font-size:16.5px;color:#262626">9</div>
<div class="t" style="left:0;top:494.33px;width:34px;text-align:center;font-size:16.5px;color:#262626">10</div>
<div class="t" style="left:0;top:518.33px;width:34px;text-align:center;font-size:16.5px;color:#262626">11</div>
<div class="t" style="left:0;top:542.33px;width:34px;text-align:center;font-size:16.5px;color:#262626">12</div>
<div class="t" style="left:0;top:566.33px;width:34px;text-align:center;font-size:16.5px;color:#262626">13</div>
<div class="t" style="left:0;top:590.33px;width:34px;text-align:center;font-size:16.5px;color:#262626">14</div>
<div class="t" style="left:0;top:614.33px;width:34px;text-align:center;font-size:16.5px;color:#262626">15</div>
<div class="t" style="left:0;top:638.33px;width:34px;text-align:center;font-size:16.5px;color:#262626">16</div>
<div class="t" style="left:0;top:662.33px;width:34px;text-align:center;font-size:16.5px;color:#262626">17</div>
<div class="t" style="left:0;top:686.33px;width:34px;text-align:center;font-size:16.5px;color:#262626">18</div>
<div class="t" style="left:0;top:710.33px;width:34px;text-align:center;font-size:16.5px;color:#262626">19</div>
<div class="t" style="left:0;top:734.33px;width:34px;text-align:center;font-size:16.5px;color:#262626">20</div>
<div class="t" style="left:0;top:758.33px;width:34px;text-align:center;font-size:16.5px;color:#262626">21</div>
<div class="t" style="left:0;top:782.33px;width:34px;text-align:center;font-size:16.5px;color:#262626">22</div>
<div class="t" style="left:0;top:806.33px;width:34px;text-align:center;font-size:16.5px;color:#262626">23</div>
<div class="t" style="left:0;top:830.33px;width:34px;text-align:center;font-size:16.5px;color:#262626">24</div>
<div class="t" style="left:0;top:854.33px;width:34px;text-align:center;font-size:16.5px;color:#262626">25</div>
<div class="t" style="left:0;top:878.33px;width:34px;text-align:center;font-size:16.5px;color:#262626">26</div>
<div class="t" style="left:0;top:902.33px;width:34px;text-align:center;font-size:16.5px;color:#262626">27</div>
<div class="t" style="left:0;top:926.33px;width:34px;text-align:center;font-size:16.5px;color:#262626">28</div>
<div class="t" style="left:0;top:950.33px;width:34px;text-align:center;font-size:16.5px;color:#262626">29</div>
<div class="t" style="left:0;top:974.33px;width:34px;text-align:center;font-size:16.5px;color:#262626">30</div>
<div class="t c" style="left:37px;top:278.58px;font-size:15.5px;letter-spacing:0.5px">age</div>
<div class="t c" style="left:117px;top:278.58px;font-size:15.5px;letter-spacing:0.5px">gender</div>
<div class="t c" style="left:210px;top:278.58px;font-size:15.5px;letter-spacing:0.5px">time_spent</div>
<div class="t c" style="left:302px;top:278.58px;font-size:15.5px;letter-spacing:0.5px">platform</div>
<div class="t c" style="left:393px;top:278.58px;font-size:15.5px;letter-spacing:0.5px">interests</div>
<div class="t c" style="left:473px;top:278.58px;font-size:15.5px;letter-spacing:0.5px">location</div>
<div class="t c" style="left:621px;top:278.58px;font-size:15.5px;letter-spacing:0.5px">demographics</div>
<div class="t c" style="left:735px;top:278.58px;font-size:15.5px;letter-spacing:0.5px">profession</div>
<div class="t c" style="left:900px;top:278.58px;font-size:15.5px;letter-spacing:0.5px">income</div>
<div class="t c" style="left:980px;top:278.58px;font-size:15.5px;letter-spacing:0.5px">indebt</div>
<div class="t c" style="left:1060px;top:278.58px;font-size:15.5px;letter-spacing:0.5px">isHomeOwner</div>
<div class="t c" style="left:1182px;top:278.58px;font-size:15.5px;letter-spacing:0.5px">Owns_Car</div>
<div class="t c" style="left:33px;top:302.58px;width:77.8px;text-align:right;font-size:15.5px;letter-spacing:0.65px">56</div>
<div class="t c" style="left:117px;top:302.58px;font-size:15.5px;letter-spacing:0.5px">male</div>
<div class="t c" style="left:206px;top:302.58px;width:89.8px;text-align:right;font-size:15.5px;letter-spacing:0.65px">3</div>
<div class="t c" style="left:302px;top:302.58px;font-size:15.5px;letter-spacing:0.5px">Instagram</div>
<div class="t c" style="left:393px;top:302.58px;font-size:15.5px;letter-spacing:0.5px">Sports</div>
<div class="t c" style="left:473px;top:302.58px;font-size:15.5px;letter-spacing:0.5px">United Kingdom</div>
<div class="t c" style="left:621px;top:302.58px;font-size:15.5px;letter-spacing:0.5px">Urban</div>
<div class="t c" style="left:735px;top:302.58px;font-size:15.5px;letter-spacing:0.5px">Software Engineer</div>
<div class="t c" style="left:896px;top:302.58px;width:77.8px;text-align:right;font-size:15.5px;letter-spacing:0.65px">19774</div>
<div class="t c" style="left:976px;top:302.58px;width:81px;text-align:center;font-size:15.5px;">TRUE</div>
<div class="t c" style="left:1056px;top:302.58px;width:122px;text-align:center;font-size:15.5px;letter-spacing:-0.9px;">FALSE</div>
<div class="t c" style="left:1178px;top:302.58px;width:95px;text-align:center;font-size:15.5px;letter-spacing:-0.9px;">FALSE</div>
<div class="t c" style="left:33px;top:326.58px;width:77.8px;text-align:right;font-size:15.5px;letter-spacing:0.65px">46</div>
<div class="t c" style="left:117px;top:326.58px;font-size:15.5px;letter-spacing:0.5px">female</div>
<div class="t c" style="left:206px;top:326.58px;width:89.8px;text-align:right;font-size:15.5px;letter-spacing:0.65px">2</div>
<div class="t c" style="left:302px;top:326.58px;font-size:15.5px;letter-spacing:0.5px">Facebook</div>
<div class="t c" style="left:393px;top:326.58px;font-size:15.5px;letter-spacing:0.5px">Travel</div>
<div class="t c" style="left:473px;top:326.58px;font-size:15.5px;letter-spacing:0.5px">United Kingdom</div>
<div class="t c" style="left:621px;top:326.58px;font-size:15.5px;letter-spacing:0.5px">Urban</div>
<div class="t c" style="left:735px;top:326.58px;font-size:15.5px;letter-spacing:0.5px">Student</div>
<div class="t c" style="left:896px;top:326.58px;width:77.8px;text-align:right;font-size:15.5px;letter-spacing:0.65px">10564</div>
<div class="t c" style="left:976px;top:326.58px;width:81px;text-align:center;font-size:15.5px;">TRUE</div>
<div class="t c" style="left:1056px;top:326.58px;width:123px;text-align:center;font-size:15.5px;">TRUE</div>
<div class="t c" style="left:1178px;top:326.58px;width:96px;text-align:center;font-size:15.5px;">TRUE</div>
<div class="t c" style="left:33px;top:350.58px;width:77.8px;text-align:right;font-size:15.5px;letter-spacing:0.65px">32</div>
<div class="t c" style="left:117px;top:350.58px;font-size:15.5px;letter-spacing:0.5px">male</div>
<div class="t c" style="left:206px;top:350.58px;width:89.8px;text-align:right;font-size:15.5px;letter-spacing:0.65px">8</div>
<div class="t c" style="left:302px;top:350.58px;font-size:15.5px;letter-spacing:0.5px">Instagram</div>
<div class="t c" style="left:393px;top:350.58px;font-size:15.5px;letter-spacing:0.5px">Sports</div>
<div class="t c" style="left:473px;top:350.58px;font-size:15.5px;letter-spacing:0.5px">Australia</div>
<div class="t c" style="left:621px;top:350.58px;font-size:15.5px;letter-spacing:0.5px">Sub_Urban</div>
<div class="t c" style="left:735px;top:350.58px;font-size:15.5px;letter-spacing:0.5px">Marketer Manager</div>
<div class="t c" style="left:896px;top:350.58px;width:77.8px;text-align:right;font-size:15.5px;letter-spacing:0.65px">13258</div>
<div class="t c" style="left:976px;top:350.58px;width:80px;text-align:center;font-size:15.5px;letter-spacing:-0.9px;">FALSE</div>
<div class="t c" style="left:1056px;top:350.58px;width:122px;text-align:center;font-size:15.5px;letter-spacing:-0.9px;">FALSE</div>
<div class="t c" style="left:1178px;top:350.58px;width:95px;text-align:center;font-size:15.5px;letter-spacing:-0.9px;">FALSE</div>
<div class="t c" style="left:33px;top:374.58px;width:77.8px;text-align:right;font-size:15.5px;letter-spacing:0.65px">60</div>
<div class="t c" style="left:117px;top:374.58px;font-size:15.5px;letter-spacing:0.5px">non-binary</div>
<div class="t c" style="left:206px;top:374.58px;width:89.8px;text-align:right;font-size:15.5px;letter-spacing:0.65px">5</div>
<div class="t c" style="left:302px;top:374.58px;font-size:15.5px;letter-spacing:0.5px">Instagram</div>
<div class="t c" style="left:393px;top:374.58px;font-size:15.5px;letter-spacing:0.5px">Travel</div>
<div class="t c" style="left:473px;top:374.58px;font-size:15.5px;letter-spacing:0.5px">United Kingdom</div>
<div class="t c" style="left:621px;top:374.58px;font-size:15.5px;letter-spacing:0.5px">Urban</div>
<div class="t c" style="left:735px;top:374.58px;font-size:15.5px;letter-spacing:0.5px">Student</div>
<div class="t c" style="left:896px;top:374.58px;width:77.8px;text-align:right;font-size:15.5px;letter-spacing:0.65px">12500</div>
<div class="t c" style="left:976px;top:374.58px;width:80px;text-align:center;font-size:15.5px;letter-spacing:-0.9px;">FALSE</div>
<div class="t c" style="left:1056px;top:374.58px;width:123px;text-align:center;font-size:15.5px;">TRUE</div>
<div class="t c" style="left:1178px;top:374.58px;width:95px;text-align:center;font-size:15.5px;letter-spacing:-0.9px;">FALSE</div>
<div class="t c" style="left:33px;top:398.58px;width:77.8px;text-align:right;font-size:15.5px;letter-spacing:0.65px">25</div>
<div class="t c" style="left:117px;top:398.58px;font-size:15.5px;letter-spacing:0.5px">male</div>
<div class="t c" style="left:206px;top:398.58px;width:89.8px;text-align:right;font-size:15.5px;letter-spacing:0.65px">1</div>
<div class="t c" style="left:302px;top:398.58px;font-size:15.5px;letter-spacing:0.5px">Instagram</div>
<div class="t c" style="left:393px;top:398.58px;font-size:15.5px;letter-spacing:0.5px">Lifestlye</div>
<div class="t c" style="left:473px;top:398.58px;font-size:15.5px;letter-spacing:0.5px">Australia</div>
<div class="t c" style="left:621px;top:398.58px;font-size:15.5px;letter-spacing:0.5px">Urban</div>
<div class="t c" style="left:735px;top:398.58px;font-size:15.5px;letter-spacing:0.5px">Software Engineer</div>
<div class="t c" style="left:896px;top:398.58px;width:77.8px;text-align:right;font-size:15.5px;letter-spacing:0.65px">14566</div>
<div class="t c" style="left:976px;top:398.58px;width:80px;text-align:center;font-size:15.5px;letter-spacing:-0.9px;">FALSE</div>
<div class="t c" style="left:1056px;top:398.58px;width:123px;text-align:center;font-size:15.5px;">TRUE</div>
<div class="t c" style="left:1178px;top:398.58px;width:96px;text-align:center;font-size:15.5px;">TRUE</div>
<div class="t c" style="left:33px;top:422.58px;width:77.8px;text-align:right;font-size:15.5px;letter-spacing:0.65px">38</div>
<div class="t c" style="left:117px;top:422.58px;font-size:15.5px;letter-spacing:0.5px">male</div>
<div class="t c" style="left:206px;top:422.58px;width:89.8px;text-align:right;font-size:15.5px;letter-spacing:0.65px">3</div>
<div class="t c" style="left:302px;top:422.58px;font-size:15.5px;letter-spacing:0.5px">Facebook</div>
<div class="t c" style="left:393px;top:422.58px;font-size:15.5px;letter-spacing:0.5px">Travel</div>
<div class="t c" style="left:473px;top:422.58px;font-size:15.5px;letter-spacing:0.5px">United States</div>
<div class="t c" style="left:621px;top:422.58px;font-size:15.5px;letter-spacing:0.5px">Urban</div>
<div class="t c" style="left:735px;top:422.58px;font-size:15.5px;letter-spacing:0.5px">Marketer Manager</div>
<div class="t c" style="left:896px;top:422.58px;width:77.8px;text-align:right;font-size:15.5px;letter-spacing:0.65px">19179</div>
<div class="t c" style="left:976px;top:422.58px;width:81px;text-align:center;font-size:15.5px;">TRUE</div>
<div class="t c" style="left:1056px;top:422.58px;width:123px;text-align:center;font-size:15.5px;">TRUE</div>
<div class="t c" style="left:1178px;top:422.58px;width:96px;text-align:center;font-size:15.5px;">TRUE</div>
<div class="t c" style="left:33px;top:446.58px;width:77.8px;text-align:right;font-size:15.5px;letter-spacing:0.65px">56</div>
<div class="t c" style="left:117px;top:446.58px;font-size:15.5px;letter-spacing:0.5px">male</div>
<div class="t c" style="left:206px;top:446.58px;width:89.8px;text-align:right;font-size:15.5px;letter-spacing:0.65px">8</div>
<div class="t c" style="left:302px;top:446.58px;font-size:15.5px;letter-spacing:0.5px">YouTube</div>
<div class="t c" style="left:393px;top:446.58px;font-size:15.5px;letter-spacing:0.5px">Sports</div>
<div class="t c" style="left:473px;top:446.58px;font-size:15.5px;letter-spacing:0.5px">United States</div>
<div class="t c" style="left:621px;top:446.58px;font-size:15.5px;letter-spacing:0.5px">Urban</div>
<div class="t c" style="left:735px;top:446.58px;font-size:15.5px;letter-spacing:0.5px">Student</div>
<div class="t c" style="left:896px;top:446.58px;width:77.8px;text-align:right;font-size:15.5px;letter-spacing:0.65px">16881</div>
<div class="t c" style="left:976px;top:446.58px;width:81px;text-align:center;font-size:15.5px;">TRUE</div>
<div class="t c" style="left:1056px;top:446.58px;width:123px;text-align:center;font-size:15.5px;">TRUE</div>
<div class="t c" style="left:1178px;top:446.58px;width:96px;text-align:center;font-size:15.5px;">TRUE</div>
<div class="t c" style="left:33px;top:470.58px;width:77.8px;text-align:right;font-size:15.5px;letter-spacing:0.65px">36</div>
<div class="t c" style="left:117px;top:470.58px;font-size:15.5px;letter-spacing:0.5px">male</div>
<div class="t c" style="left:206px;top:470.58px;width:89.8px;text-align:right;font-size:15.5px;letter-spacing:0.65px">4</div>
<div class="t c" style="left:302px;top:470.58px;font-size:15.5px;letter-spacing:0.5px">Instagram</div>
<div class="t c" style="left:393px;top:470.58px;font-size:15.5px;letter-spacing:0.5px">Sports</div>
<div class="t c" style="left:473px;top:470.58px;font-size:15.5px;letter-spacing:0.5px">Australia</div>
<div class="t c" style="left:621px;top:470.58px;font-size:15.5px;letter-spacing:0.5px">Urban</div>
<div class="t c" style="left:735px;top:470.58px;font-size:15.5px;letter-spacing:0.5px">Marketer Manager</div>
<div class="t c" style="left:896px;top:470.58px;width:77.8px;text-align:right;font-size:15.5px;letter-spacing:0.65px">13636</div>
<div class="t c" style="left:976px;top:470.58px;width:81px;text-align:center;font-size:15.5px;">TRUE</div>
<div class="t c" style="left:1056px;top:470.58px;width:122px;text-align:center;font-size:15.5px;letter-spacing:-0.9px;">FALSE</div>
<div class="t c" style="left:1178px;top:470.58px;width:96px;text-align:center;font-size:15.5px;">TRUE</div>
<div class="t c" style="left:33px;top:494.58px;width:77.8px;text-align:right;font-size:15.5px;letter-spacing:0.65px">40</div>
<div class="t c" style="left:117px;top:494.58px;font-size:15.5px;letter-spacing:0.5px">non-binary</div>
<div class="t c" style="left:206px;top:494.58px;width:89.8px;text-align:right;font-size:15.5px;letter-spacing:0.65px">7</div>
<div class="t c" style="left:302px;top:494.58px;font-size:15.5px;letter-spacing:0.5px">YouTube</div>
<div class="t c" style="left:393px;top:494.58px;font-size:15.5px;letter-spacing:0.5px">Lifestlye</div>
<div class="t c" style="left:473px;top:494.58px;font-size:15.5px;letter-spacing:0.5px">Australia</div>
<div class="t c" style="left:621px;top:494.58px;font-size:15.5px;letter-spacing:0.5px">Sub_Urban</div>
<div class="t c" style="left:735px;top:494.58px;font-size:15.5px;letter-spacing:0.5px">Marketer Manager</div>
<div class="t c" style="left:896px;top:494.58px;width:77.8px;text-align:right;font-size:15.5px;letter-spacing:0.65px">16030</div>
<div class="t c" style="left:976px;top:494.58px;width:80px;text-align:center;font-size:15.5px;letter-spacing:-0.9px;">FALSE</div>
<div class="t c" style="left:1056px;top:494.58px;width:122px;text-align:center;font-size:15.5px;letter-spacing:-0.9px;">FALSE</div>
<div class="t c" style="left:1178px;top:494.58px;width:96px;text-align:center;font-size:15.5px;">TRUE</div>
<div class="t c" style="left:33px;top:518.58px;width:77.8px;text-align:right;font-size:15.5px;letter-spacing:0.65px">28</div>
<div class="t c" style="left:117px;top:518.58px;font-size:15.5px;letter-spacing:0.5px">non-binary</div>
<div class="t c" style="left:206px;top:518.58px;width:89.8px;text-align:right;font-size:15.5px;letter-spacing:0.65px">2</div>
<div class="t c" style="left:302px;top:518.58px;font-size:15.5px;letter-spacing:0.5px">Instagram</div>
<div class="t c" style="left:393px;top:518.58px;font-size:15.5px;letter-spacing:0.5px">Sports</div>
<div class="t c" style="left:473px;top:518.58px;font-size:15.5px;letter-spacing:0.5px">Australia</div>
<div class="t c" style="left:621px;top:518.58px;font-size:15.5px;letter-spacing:0.5px">Sub_Urban</div>
<div class="t c" style="left:735px;top:518.58px;font-size:15.5px;letter-spacing:0.5px">Marketer Manager</div>
<div class="t c" style="left:896px;top:518.58px;width:77.8px;text-align:right;font-size:15.5px;letter-spacing:0.65px">10223</div>
<div class="t c" style="left:976px;top:518.58px;width:81px;text-align:center;font-size:15.5px;">TRUE</div>
<div class="t c" style="left:1056px;top:518.58px;width:122px;text-align:center;font-size:15.5px;letter-spacing:-0.9px;">FALSE</div>
<div class="t c" style="left:1178px;top:518.58px;width:96px;text-align:center;font-size:15.5px;">TRUE</div>
<div class="t c" style="left:33px;top:542.58px;width:77.8px;text-align:right;font-size:15.5px;letter-spacing:0.65px">28</div>
<div class="t c" style="left:117px;top:542.58px;font-size:15.5px;letter-spacing:0.5px">female</div>
<div class="t c" style="left:206px;top:542.58px;width:89.8px;text-align:right;font-size:15.5px;letter-spacing:0.65px">7</div>
<div class="t c" style="left:302px;top:542.58px;font-size:15.5px;letter-spacing:0.5px">YouTube</div>
<div class="t c" style="left:393px;top:542.58px;font-size:15.5px;letter-spacing:0.5px">Lifestlye</div>
<div class="t c" style="left:473px;top:542.58px;font-size:15.5px;letter-spacing:0.5px">United Kingdom</div>
<div class="t c" style="left:621px;top:542.58px;font-size:15.5px;letter-spacing:0.5px">Urban</div>
<div class="t c" style="left:735px;top:542.58px;font-size:15.5px;letter-spacing:0.5px">Student</div>
<div class="t c" style="left:896px;top:542.58px;width:77.8px;text-align:right;font-size:15.5px;letter-spacing:0.65px">16297</div>
<div class="t c" style="left:976px;top:542.58px;width:81px;text-align:center;font-size:15.5px;">TRUE</div>
<div class="t c" style="left:1056px;top:542.58px;width:123px;text-align:center;font-size:15.5px;">TRUE</div>
<div class="t c" style="left:1178px;top:542.58px;width:95px;text-align:center;font-size:15.5px;letter-spacing:-0.9px;">FALSE</div>
<div class="t c" style="left:33px;top:566.58px;width:77.8px;text-align:right;font-size:15.5px;letter-spacing:0.65px">41</div>
<div class="t c" style="left:117px;top:566.58px;font-size:15.5px;letter-spacing:0.5px">non-binary</div>
<div class="t c" style="left:206px;top:566.58px;width:89.8px;text-align:right;font-size:15.5px;letter-spacing:0.65px">5</div>
<div class="t c" style="left:302px;top:566.58px;font-size:15.5px;letter-spacing:0.5px">Facebook</div>
<div class="t c" style="left:393px;top:566.58px;font-size:15.5px;letter-spacing:0.5px">Sports</div>
<div class="t c" style="left:473px;top:566.58px;font-size:15.5px;letter-spacing:0.5px">United States</div>
<div class="t c" style="left:621px;top:566.58px;font-size:15.5px;letter-spacing:0.5px">Sub_Urban</div>
<div class="t c" style="left:735px;top:566.58px;font-size:15.5px;letter-spacing:0.5px">Marketer Manager</div>
<div class="t c" style="left:896px;top:566.58px;width:77.8px;text-align:right;font-size:15.5px;letter-spacing:0.65px">10350</div>
<div class="t c" style="left:976px;top:566.58px;width:80px;text-align:center;font-size:15.5px;letter-spacing:-0.9px;">FALSE</div>
<div class="t c" style="left:1056px;top:566.58px;width:122px;text-align:center;font-size:15.5px;letter-spacing:-0.9px;">FALSE</div>
<div class="t c" style="left:1178px;top:566.58px;width:95px;text-align:center;font-size:15.5px;letter-spacing:-0.9px;">FALSE</div>
<div class="t c" style="left:33px;top:590.58px;width:77.8px;text-align:right;font-size:15.5px;letter-spacing:0.65px">53</div>
<div class="t c" style="left:117px;top:590.58px;font-size:15.5px;letter-spacing:0.5px">non-binary</div>
<div class="t c" style="left:206px;top:590.58px;width:89.8px;text-align:right;font-size:15.5px;letter-spacing:0.65px">5</div>
<div class="t c" style="left:302px;top:590.58px;font-size:15.5px;letter-spacing:0.5px">Facebook</div>
<div class="t c" style="left:393px;top:590.58px;font-size:15.5px;letter-spacing:0.5px">Sports</div>
<div class="t c" style="left:473px;top:590.58px;font-size:15.5px;letter-spacing:0.5px">Australia</div>
<div class="t c" style="left:621px;top:590.58px;font-size:15.5px;letter-spacing:0.5px">Rural</div>
<div class="t c" style="left:735px;top:590.58px;font-size:15.5px;letter-spacing:0.5px">Student</div>
<div class="t c" style="left:896px;top:590.58px;width:77.8px;text-align:right;font-size:15.5px;letter-spacing:0.65px">17314</div>
<div class="t c" style="left:976px;top:590.58px;width:80px;text-align:center;font-size:15.5px;letter-spacing:-0.9px;">FALSE</div>
<div class="t c" style="left:1056px;top:590.58px;width:123px;text-align:center;font-size:15.5px;">TRUE</div>
<div class="t c" style="left:1178px;top:590.58px;width:96px;text-align:center;font-size:15.5px;">TRUE</div>
<div class="t c" style="left:33px;top:614.58px;width:77.8px;text-align:right;font-size:15.5px;letter-spacing:0.65px">57</div>
<div class="t c" style="left:117px;top:614.58px;font-size:15.5px;letter-spacing:0.5px">female</div>
<div class="t c" style="left:206px;top:614.58px;width:89.8px;text-align:right;font-size:15.5px;letter-spacing:0.65px">6</div>
<div class="t c" style="left:302px;top:614.58px;font-size:15.5px;letter-spacing:0.5px">Instagram</div>
<div class="t c" style="left:393px;top:614.58px;font-size:15.5px;letter-spacing:0.5px">Lifestlye</div>
<div class="t c" style="left:473px;top:614.58px;font-size:15.5px;letter-spacing:0.5px">United Kingdom</div>
<div class="t c" style="left:621px;top:614.58px;font-size:15.5px;letter-spacing:0.5px">Urban</div>
<div class="t c" style="left:735px;top:614.58px;font-size:15.5px;letter-spacing:0.5px">Software Engineer</div>
<div class="t c" style="left:896px;top:614.58px;width:77.8px;text-align:right;font-size:15.5px;letter-spacing:0.65px">11928</div>
<div class="t c" style="left:976px;top:614.58px;width:80px;text-align:center;font-size:15.5px;letter-spacing:-0.9px;">FALSE</div>
<div class="t c" style="left:1056px;top:614.58px;width:123px;text-align:center;font-size:15.5px;">TRUE</div>
<div class="t c" style="left:1178px;top:614.58px;width:95px;text-align:center;font-size:15.5px;letter-spacing:-0.9px;">FALSE</div>
<div class="t c" style="left:33px;top:638.58px;width:77.8px;text-align:right;font-size:15.5px;letter-spacing:0.65px">41</div>
<div class="t c" style="left:117px;top:638.58px;font-size:15.5px;letter-spacing:0.5px">non-binary</div>
<div class="t c" style="left:206px;top:638.58px;width:89.8px;text-align:right;font-size:15.5px;letter-spacing:0.65px">9</div>
<div class="t c" style="left:302px;top:638.58px;font-size:15.5px;letter-spacing:0.5px">YouTube</div>
<div class="t c" style="left:393px;top:638.58px;font-size:15.5px;letter-spacing:0.5px">Travel</div>
<div class="t c" style="left:473px;top:638.58px;font-size:15.5px;letter-spacing:0.5px">United States</div>
<div class="t c" style="left:621px;top:638.58px;font-size:15.5px;letter-spacing:0.5px">Rural</div>
<div class="t c" style="left:735px;top:638.58px;font-size:15.5px;letter-spacing:0.5px">Student</div>
<div class="t c" style="left:896px;top:638.58px;width:77.8px;text-align:right;font-size:15.5px;letter-spacing:0.65px">17743</div>
<div class="t c" style="left:976px;top:638.58px;width:81px;text-align:center;font-size:15.5px;">TRUE</div>
<div class="t c" style="left:1056px;top:638.58px;width:123px;text-align:center;font-size:15.5px;">TRUE</div>
<div class="t c" style="left:1178px;top:638.58px;width:95px;text-align:center;font-size:15.5px;letter-spacing:-0.9px;">FALSE</div>
<div class="t c" style="left:33px;top:662.58px;width:77.8px;text-align:right;font-size:15.5px;letter-spacing:0.65px">20</div>
<div class="t c" style="left:117px;top:662.58px;font-size:15.5px;letter-spacing:0.5px">male</div>
<div class="t c" style="left:206px;top:662.58px;width:89.8px;text-align:right;font-size:15.5px;letter-spacing:0.65px">6</div>
<div class="t c" style="left:302px;top:662.58px;font-size:15.5px;letter-spacing:0.5px">Facebook</div>
<div class="t c" style="left:393px;top:662.58px;font-size:15.5px;letter-spacing:0.5px">Sports</div>
<div class="t c" style="left:473px;top:662.58px;font-size:15.5px;letter-spacing:0.5px">United Kingdom</div>
<div class="t c" style="left:621px;top:662.58px;font-size:15.5px;letter-spacing:0.5px">Sub_Urban</div>
<div class="t c" style="left:735px;top:662.58px;font-size:15.5px;letter-spacing:0.5px">Software Engineer</div>
<div class="t c" style="left:896px;top:662.58px;width:77.8px;text-align:right;font-size:15.5px;letter-spacing:0.65px">18540</div>
<div class="t c" style="left:976px;top:662.58px;width:81px;text-align:center;font-size:15.5px;">TRUE</div>
<div class="t c" style="left:1056px;top:662.58px;width:123px;text-align:center;font-size:15.5px;">TRUE</div>
<div class="t c" style="left:1178px;top:662.58px;width:95px;text-align:center;font-size:15.5px;letter-spacing:-0.9px;">FALSE</div>
<div class="t c" style="left:33px;top:686.58px;width:77.8px;text-align:right;font-size:15.5px;letter-spacing:0.65px">39</div>
<div class="t c" style="left:117px;top:686.58px;font-size:15.5px;letter-spacing:0.5px">male</div>
<div class="t c" style="left:206px;top:686.58px;width:89.8px;text-align:right;font-size:15.5px;letter-spacing:0.65px">8</div>
<div class="t c" style="left:302px;top:686.58px;font-size:15.5px;letter-spacing:0.5px">Instagram</div>
<div class="t c" style="left:393px;top:686.58px;font-size:15.5px;letter-spacing:0.5px">Travel</div>
<div class="t c" style="left:473px;top:686.58px;font-size:15.5px;letter-spacing:0.5px">United States</div>
<div class="t c" style="left:621px;top:686.58px;font-size:15.5px;letter-spacing:0.5px">Sub_Urban</div>
<div class="t c" style="left:735px;top:686.58px;font-size:15.5px;letter-spacing:0.5px">Student</div>
<div class="t c" style="left:896px;top:686.58px;width:77.8px;text-align:right;font-size:15.5px;letter-spacing:0.65px">14732</div>
<div class="t c" style="left:976px;top:686.58px;width:81px;text-align:center;font-size:15.5px;">TRUE</div>
<div class="t c" style="left:1056px;top:686.58px;width:123px;text-align:center;font-size:15.5px;">TRUE</div>
<div class="t c" style="left:1178px;top:686.58px;width:95px;text-align:center;font-size:15.5px;letter-spacing:-0.9px;">FALSE</div>
<div class="t c" style="left:33px;top:710.58px;width:77.8px;text-align:right;font-size:15.5px;letter-spacing:0.65px">19</div>
<div class="t c" style="left:117px;top:710.58px;font-size:15.5px;letter-spacing:0.5px">female</div>
<div class="t c" style="left:206px;top:710.58px;width:89.8px;text-align:right;font-size:15.5px;letter-spacing:0.65px">7</div>
<div class="t c" style="left:302px;top:710.58px;font-size:15.5px;letter-spacing:0.5px">Instagram</div>
<div class="t c" style="left:393px;top:710.58px;font-size:15.5px;letter-spacing:0.5px">Sports</div>
<div class="t c" style="left:473px;top:710.58px;font-size:15.5px;letter-spacing:0.5px">United Kingdom</div>
<div class="t c" style="left:621px;top:710.58px;font-size:15.5px;letter-spacing:0.5px">Rural</div>
<div class="t c" style="left:735px;top:710.58px;font-size:15.5px;letter-spacing:0.5px">Marketer Manager</div>
<div class="t c" style="left:896px;top:710.58px;width:77.8px;text-align:right;font-size:15.5px;letter-spacing:0.65px">11017</div>
<div class="t c" style="left:976px;top:710.58px;width:80px;text-align:center;font-size:15.5px;letter-spacing:-0.9px;">FALSE</div>
<div class="t c" style="left:1056px;top:710.58px;width:123px;text-align:center;font-size:15.5px;">TRUE</div>
<div class="t c" style="left:1178px;top:710.58px;width:96px;text-align:center;font-size:15.5px;">TRUE</div>
<div class="t c" style="left:33px;top:734.58px;width:77.8px;text-align:right;font-size:15.5px;letter-spacing:0.65px">41</div>
<div class="t c" style="left:117px;top:734.58px;font-size:15.5px;letter-spacing:0.5px">female</div>
<div class="t c" style="left:206px;top:734.58px;width:89.8px;text-align:right;font-size:15.5px;letter-spacing:0.65px">9</div>
<div class="t c" style="left:302px;top:734.58px;font-size:15.5px;letter-spacing:0.5px">Facebook</div>
<div class="t c" style="left:393px;top:734.58px;font-size:15.5px;letter-spacing:0.5px">Sports</div>
<div class="t c" style="left:473px;top:734.58px;font-size:15.5px;letter-spacing:0.5px">United States</div>
<div class="t c" style="left:621px;top:734.58px;font-size:15.5px;letter-spacing:0.5px">Sub_Urban</div>
<div class="t c" style="left:735px;top:734.58px;font-size:15.5px;letter-spacing:0.5px">Student</div>
<div class="t c" style="left:896px;top:734.58px;width:77.8px;text-align:right;font-size:15.5px;letter-spacing:0.65px">12226</div>
<div class="t c" style="left:976px;top:734.58px;width:80px;text-align:center;font-size:15.5px;letter-spacing:-0.9px;">FALSE</div>
<div class="t c" style="left:1056px;top:734.58px;width:122px;text-align:center;font-size:15.5px;letter-spacing:-0.9px;">FALSE</div>
<div class="t c" style="left:1178px;top:734.58px;width:95px;text-align:center;font-size:15.5px;letter-spacing:-0.9px;">FALSE</div>
<div class="t c" style="left:33px;top:758.58px;width:77.8px;text-align:right;font-size:15.5px;letter-spacing:0.65px">61</div>
<div class="t c" style="left:117px;top:758.58px;font-size:15.5px;letter-spacing:0.5px">female</div>
<div class="t c" style="left:206px;top:758.58px;width:89.8px;text-align:right;font-size:15.5px;letter-spacing:0.65px">4</div>
<div class="t c" style="left:302px;top:758.58px;font-size:15.5px;letter-spacing:0.5px">Facebook</div>
<div class="t c" style="left:393px;top:758.58px;font-size:15.5px;letter-spacing:0.5px">Sports</div>
<div class="t c" style="left:473px;top:758.58px;font-size:15.5px;letter-spacing:0.5px">United States</div>
<div class="t c" style="left:621px;top:758.58px;font-size:15.5px;letter-spacing:0.5px">Urban</div>
<div class="t c" style="left:735px;top:758.58px;font-size:15.5px;letter-spacing:0.5px">Marketer Manager</div>
<div class="t c" style="left:896px;top:758.58px;width:77.8px;text-align:right;font-size:15.5px;letter-spacing:0.65px">17206</div>
<div class="t c" style="left:976px;top:758.58px;width:80px;text-align:center;font-size:15.5px;letter-spacing:-0.9px;">FALSE</div>
<div class="t c" style="left:1056px;top:758.58px;width:122px;text-align:center;font-size:15.5px;letter-spacing:-0.9px;">FALSE</div>
<div class="t c" style="left:1178px;top:758.58px;width:95px;text-align:center;font-size:15.5px;letter-spacing:-0.9px;">FALSE</div>
<div class="t c" style="left:33px;top:782.58px;width:77.8px;text-align:right;font-size:15.5px;letter-spacing:0.65px">47</div>
<div class="t c" style="left:117px;top:782.58px;font-size:15.5px;letter-spacing:0.5px">male</div>
<div class="t c" style="left:206px;top:782.58px;width:89.8px;text-align:right;font-size:15.5px;letter-spacing:0.65px">2</div>
<div class="t c" style="left:302px;top:782.58px;font-size:15.5px;letter-spacing:0.5px">Instagram</div>
<div class="t c" style="left:393px;top:782.58px;font-size:15.5px;letter-spacing:0.5px">Sports</div>
<div class="t c" style="left:473px;top:782.58px;font-size:15.5px;letter-spacing:0.5px">United Kingdom</div>
<div class="t c" style="left:621px;top:782.58px;font-size:15.5px;letter-spacing:0.5px">Rural</div>
<div class="t c" style="left:735px;top:782.58px;font-size:15.5px;letter-spacing:0.5px">Software Engineer</div>
<div class="t c" style="left:896px;top:782.58px;width:77.8px;text-align:right;font-size:15.5px;letter-spacing:0.65px">17170</div>
<div class="t c" style="left:976px;top:782.58px;width:80px;text-align:center;font-size:15.5px;letter-spacing:-0.9px;">FALSE</div>
<div class="t c" style="left:1056px;top:782.58px;width:122px;text-align:center;font-size:15.5px;letter-spacing:-0.9px;">FALSE</div>
<div class="t c" style="left:1178px;top:782.58px;width:96px;text-align:center;font-size:15.5px;">TRUE</div>
<div class="t c" style="left:33px;top:806.58px;width:77.8px;text-align:right;font-size:15.5px;letter-spacing:0.65px">55</div>
<div class="t c" style="left:117px;top:806.58px;font-size:15.5px;letter-spacing:0.5px">non-binary</div>
<div class="t c" style="left:206px;top:806.58px;width:89.8px;text-align:right;font-size:15.5px;letter-spacing:0.65px">7</div>
<div class="t c" style="left:302px;top:806.58px;font-size:15.5px;letter-spacing:0.5px">YouTube</div>
<div class="t c" style="left:393px;top:806.58px;font-size:15.5px;letter-spacing:0.5px">Travel</div>
<div class="t c" style="left:473px;top:806.58px;font-size:15.5px;letter-spacing:0.5px">Australia</div>
<div class="t c" style="left:621px;top:806.58px;font-size:15.5px;letter-spacing:0.5px">Urban</div>
<div class="t c" style="left:735px;top:806.58px;font-size:15.5px;letter-spacing:0.5px">Student</div>
<div class="t c" style="left:896px;top:806.58px;width:77.8px;text-align:right;font-size:15.5px;letter-spacing:0.65px">16207</div>
<div class="t c" style="left:976px;top:806.58px;width:81px;text-align:center;font-size:15.5px;">TRUE</div>
<div class="t c" style="left:1056px;top:806.58px;width:122px;text-align:center;font-size:15.5px;letter-spacing:-0.9px;">FALSE</div>
<div class="t c" style="left:1178px;top:806.58px;width:96px;text-align:center;font-size:15.5px;">TRUE</div>
<div class="t c" style="left:33px;top:830.58px;width:77.8px;text-align:right;font-size:15.5px;letter-spacing:0.65px">19</div>
<div class="t c" style="left:117px;top:830.58px;font-size:15.5px;letter-spacing:0.5px">male</div>
<div class="t c" style="left:206px;top:830.58px;width:89.8px;text-align:right;font-size:15.5px;letter-spacing:0.65px">6</div>
<div class="t c" style="left:302px;top:830.58px;font-size:15.5px;letter-spacing:0.5px">YouTube</div>
<div class="t c" style="left:393px;top:830.58px;font-size:15.5px;letter-spacing:0.5px">Travel</div>
<div class="t c" style="left:473px;top:830.58px;font-size:15.5px;letter-spacing:0.5px">United States</div>
<div class="t c" style="left:621px;top:830.58px;font-size:15.5px;letter-spacing:0.5px">Rural</div>
<div class="t c" style="left:735px;top:830.58px;font-size:15.5px;letter-spacing:0.5px">Marketer Manager</div>
<div class="t c" style="left:896px;top:830.58px;width:77.8px;text-align:right;font-size:15.5px;letter-spacing:0.65px">12419</div>
<div class="t c" style="left:976px;top:830.58px;width:81px;text-align:center;font-size:15.5px;">TRUE</div>
<div class="t c" style="left:1056px;top:830.58px;width:123px;text-align:center;font-size:15.5px;">TRUE</div>
<div class="t c" style="left:1178px;top:830.58px;width:96px;text-align:center;font-size:15.5px;">TRUE</div>
<div class="t c" style="left:33px;top:854.58px;width:77.8px;text-align:right;font-size:15.5px;letter-spacing:0.65px">38</div>
<div class="t c" style="left:117px;top:854.58px;font-size:15.5px;letter-spacing:0.5px">female</div>
<div class="t c" style="left:206px;top:854.58px;width:89.8px;text-align:right;font-size:15.5px;letter-spacing:0.65px">1</div>
<div class="t c" style="left:302px;top:854.58px;font-size:15.5px;letter-spacing:0.5px">YouTube</div>
<div class="t c" style="left:393px;top:854.58px;font-size:15.5px;letter-spacing:0.5px">Sports</div>
<div class="t c" style="left:473px;top:854.58px;font-size:15.5px;letter-spacing:0.5px">Australia</div>
<div class="t c" style="left:621px;top:854.58px;font-size:15.5px;letter-spacing:0.5px">Sub_Urban</div>
<div class="t c" style="left:735px;top:854.58px;font-size:15.5px;letter-spacing:0.5px">Software Engineer</div>
<div class="t c" style="left:896px;top:854.58px;width:77.8px;text-align:right;font-size:15.5px;letter-spacing:0.65px">16240</div>
<div class="t c" style="left:976px;top:854.58px;width:81px;text-align:center;font-size:15.5px;">TRUE</div>
<div class="t c" style="left:1056px;top:854.58px;width:123px;text-align:center;font-size:15.5px;">TRUE</div>
<div class="t c" style="left:1178px;top:854.58px;width:96px;text-align:center;font-size:15.5px;">TRUE</div>
<div class="t c" style="left:33px;top:878.58px;width:77.8px;text-align:right;font-size:15.5px;letter-spacing:0.65px">50</div>
<div class="t c" style="left:117px;top:878.58px;font-size:15.5px;letter-spacing:0.5px">non-binary</div>
<div class="t c" style="left:206px;top:878.58px;width:89.8px;text-align:right;font-size:15.5px;letter-spacing:0.65px">9</div>
<div class="t c" style="left:302px;top:878.58px;font-size:15.5px;letter-spacing:0.5px">Instagram</div>
<div class="t c" style="left:393px;top:878.58px;font-size:15.5px;letter-spacing:0.5px">Sports</div>
<div class="t c" style="left:473px;top:878.58px;font-size:15.5px;letter-spacing:0.5px">United Kingdom</div>
<div class="t c" style="left:621px;top:878.58px;font-size:15.5px;letter-spacing:0.5px">Rural</div>
<div class="t c" style="left:735px;top:878.58px;font-size:15.5px;letter-spacing:0.5px">Software Engineer</div>
<div class="t c" style="left:896px;top:878.58px;width:77.8px;text-align:right;font-size:15.5px;letter-spacing:0.65px">11893</div>
<div class="t c" style="left:976px;top:878.58px;width:81px;text-align:center;font-size:15.5px;">TRUE</div>
<div class="t c" style="left:1056px;top:878.58px;width:122px;text-align:center;font-size:15.5px;letter-spacing:-0.9px;">FALSE</div>
<div class="t c" style="left:1178px;top:878.58px;width:95px;text-align:center;font-size:15.5px;letter-spacing:-0.9px;">FALSE</div>
<div class="t c" style="left:33px;top:902.58px;width:77.8px;text-align:right;font-size:15.5px;letter-spacing:0.65px">29</div>
<div class="t c" style="left:117px;top:902.58px;font-size:15.5px;letter-spacing:0.5px">non-binary</div>
<div class="t c" style="left:206px;top:902.58px;width:89.8px;text-align:right;font-size:15.5px;letter-spacing:0.65px">9</div>
<div class="t c" style="left:302px;top:902.58px;font-size:15.5px;letter-spacing:0.5px">Facebook</div>
<div class="t c" style="left:393px;top:902.58px;font-size:15.5px;letter-spacing:0.5px">Travel</div>
<div class="t c" style="left:473px;top:902.58px;font-size:15.5px;letter-spacing:0.5px">Australia</div>
<div class="t c" style="left:621px;top:902.58px;font-size:15.5px;letter-spacing:0.5px">Rural</div>
<div class="t c" style="left:735px;top:902.58px;font-size:15.5px;letter-spacing:0.5px">Student</div>
<div class="t c" style="left:896px;top:902.58px;width:77.8px;text-align:right;font-size:15.5px;letter-spacing:0.65px">15322</div>
<div class="t c" style="left:976px;top:902.58px;width:81px;text-align:center;font-size:15.5px;">TRUE</div>
<div class="t c" style="left:1056px;top:902.58px;width:122px;text-align:center;font-size:15.5px;letter-spacing:-0.9px;">FALSE</div>
<div class="t c" style="left:1178px;top:902.58px;width:96px;text-align:center;font-size:15.5px;">TRUE</div>
<div class="t c" style="left:33px;top:926.58px;width:77.8px;text-align:right;font-size:15.5px;letter-spacing:0.65px">39</div>
<div class="t c" style="left:117px;top:926.58px;font-size:15.5px;letter-spacing:0.5px">male</div>
<div class="t c" style="left:206px;top:926.58px;width:89.8px;text-align:right;font-size:15.5px;letter-spacing:0.65px">2</div>
<div class="t c" style="left:302px;top:926.58px;font-size:15.5px;letter-spacing:0.5px">Instagram</div>
<div class="t c" style="left:393px;top:926.58px;font-size:15.5px;letter-spacing:0.5px">Lifestlye</div>
<div class="t c" style="left:473px;top:926.58px;font-size:15.5px;letter-spacing:0.5px">Australia</div>
<div class="t c" style="left:621px;top:926.58px;font-size:15.5px;letter-spacing:0.5px">Urban</div>
<div class="t c" style="left:735px;top:926.58px;font-size:15.5px;letter-spacing:0.5px">Software Engineer</div>
<div class="t c" style="left:896px;top:926.58px;width:77.8px;text-align:right;font-size:15.5px;letter-spacing:0.65px">17718</div>
<div class="t c" style="left:976px;top:926.58px;width:81px;text-align:center;font-size:15.5px;">TRUE</div>
<div class="t c" style="left:1056px;top:926.58px;width:122px;text-align:center;font-size:15.5px;letter-spacing:-0.9px;">FALSE</div>
<div class="t c" style="left:1178px;top:926.58px;width:95px;text-align:center;font-size:15.5px;letter-spacing:-0.9px;">FALSE</div>
<div class="t c" style="left:33px;top:950.58px;width:77.8px;text-align:right;font-size:15.5px;letter-spacing:0.65px">61</div>
<div class="t c" style="left:117px;top:950.58px;font-size:15.5px;letter-spacing:0.5px">female</div>
<div class="t c" style="left:206px;top:950.58px;width:89.8px;text-align:right;font-size:15.5px;letter-spacing:0.65px">3</div>
<div class="t c" style="left:302px;top:950.58px;font-size:15.5px;letter-spacing:0.5px">Facebook</div>
<div class="t c" style="left:393px;top:950.58px;font-size:15.5px;letter-spacing:0.5px">Lifestlye</div>
<div class="t c" style="left:473px;top:950.58px;font-size:15.5px;letter-spacing:0.5px">Australia</div>
<div class="t c" style="left:621px;top:950.58px;font-size:15.5px;letter-spacing:0.5px">Sub_Urban</div>
<div class="t c" style="left:735px;top:950.58px;font-size:15.5px;letter-spacing:0.5px">Marketer Manager</div>
<div class="t c" style="left:896px;top:950.58px;width:77.8px;text-align:right;font-size:15.5px;letter-spacing:0.65px">16878</div>
<div class="t c" style="left:976px;top:950.58px;width:81px;text-align:center;font-size:15.5px;">TRUE</div>
<div class="t c" style="left:1056px;top:950.58px;width:122px;text-align:center;font-size:15.5px;letter-spacing:-0.9px;">FALSE</div>
<div class="t c" style="left:1178px;top:950.58px;width:95px;text-align:center;font-size:15.5px;letter-spacing:-0.9px;">FALSE</div>
<div class="a" style="left:32px;top:272px;width:83px;height:27px;border:2px solid #217346"></div>
<div class="a" style="left:109px;top:293px;width:9px;height:9px;background:#fff"></div>
<div class="a" style="left:111px;top:295px;width:5px;height:5px;background:#217346"></div>
<div class="a" style="left:0;top:974px;width:1507px;height:29px;background:#e6e6e6;border-top:1px solid #c6c6c6"></div>
<div class="a" style="left:103px;top:974px;width:128px;height:26px;background:#fff;border-left:1px solid #c6c6c6;border-right:1px solid #c6c6c6"></div>
<div class="a" style="left:103px;top:997px;width:128px;height:2px;background:#217346"></div>
<div class="t" style="left:115.18px;top:976.33px;font-size:16.14px;letter-spacing:0.000px;color:#217346;font-weight:bold;font-family:'Liberation Sans';">Social_media</div>
<svg style="left:0;top:974px" width="300" height="29" viewBox="0 974 300 29">
<path d="M33 984 L28 988.5 L33 993 Z" fill="#c0c0c0"/>
<path d="M57 984 L62 988.5 L57 993 Z" fill="#c0c0c0"/>
<circle cx="274" cy="989" r="9.5" fill="none" stroke="#777" stroke-width="1.2"/>
<path d="M274 983 V995 M268 989 H280" stroke="#666" stroke-width="1.6"/>
</svg>
<svg style="left:1140px;top:974px" width="367" height="29" viewBox="1140 974 367 29">
<rect x="1149" y="982" width="3" height="3" fill="#a8a8a8"/><rect x="1149" y="987" width="3" height="3" fill="#a8a8a8"/><rect x="1149" y="992" width="3" height="3" fill="#a8a8a8"/>
</svg>
<div class="a" style="left:1167px;top:979px;width:345px;height:19px;background:#fff;border:1px solid #a6a6a6"></div>
<div class="a" style="left:1185px;top:979px;width:1px;height:19px;background:#a6a6a6"></div>
<svg style="left:1167px;top:979px" width="19" height="19" viewBox="0 0 19 19"><path d="M12 5 L7 9.5 L12 14 Z" fill="#222"/></svg>
<div class="a" style="left:0;top:1003px;width:1507px;height:27px;background:#f3f3f3;border-top:1px solid #d4d4d4"></div>
<div class="t" style="left:13.28px;top:1011.56px;font-size:12.80px;letter-spacing:-0.119px;color:#262626;font-weight:normal;font-family:'Liberation Sans';">Ready</div>
<svg style="left:0;top:1004px" width="110" height="26" viewBox="0 1004 110 26">
<path d="M80.6 1010.7 A7 7 0 1 0 87.4 1022.5" fill="none" stroke="#444" stroke-width="1.3" stroke-dasharray="3.6 1.8"/>
<path d="M82.5 1009 V1017.5 M80.2 1015.2 L82.5 1017.6 L84.8 1015.2" fill="none" stroke="#444" stroke-width="1.3"/>
<path d="M85.8 1016.2 C86.3 1012.8 92.8 1012.8 92.8 1016.6 C92.8 1019.4 89.8 1019.4 89.8 1023" fill="none" stroke="#444" stroke-width="2.5"/>
<rect x="88.4" y="1024.2" width="2.8" height="2.6" fill="#444"/>
</svg>
<div class="t" style="left:96.50px;top:1011.56px;font-size:12.80px;letter-spacing:-0.058px;color:#262626;font-weight:normal;font-family:'Liberation Sans';">Accessibility: Unavailable</div>
</body></html>
